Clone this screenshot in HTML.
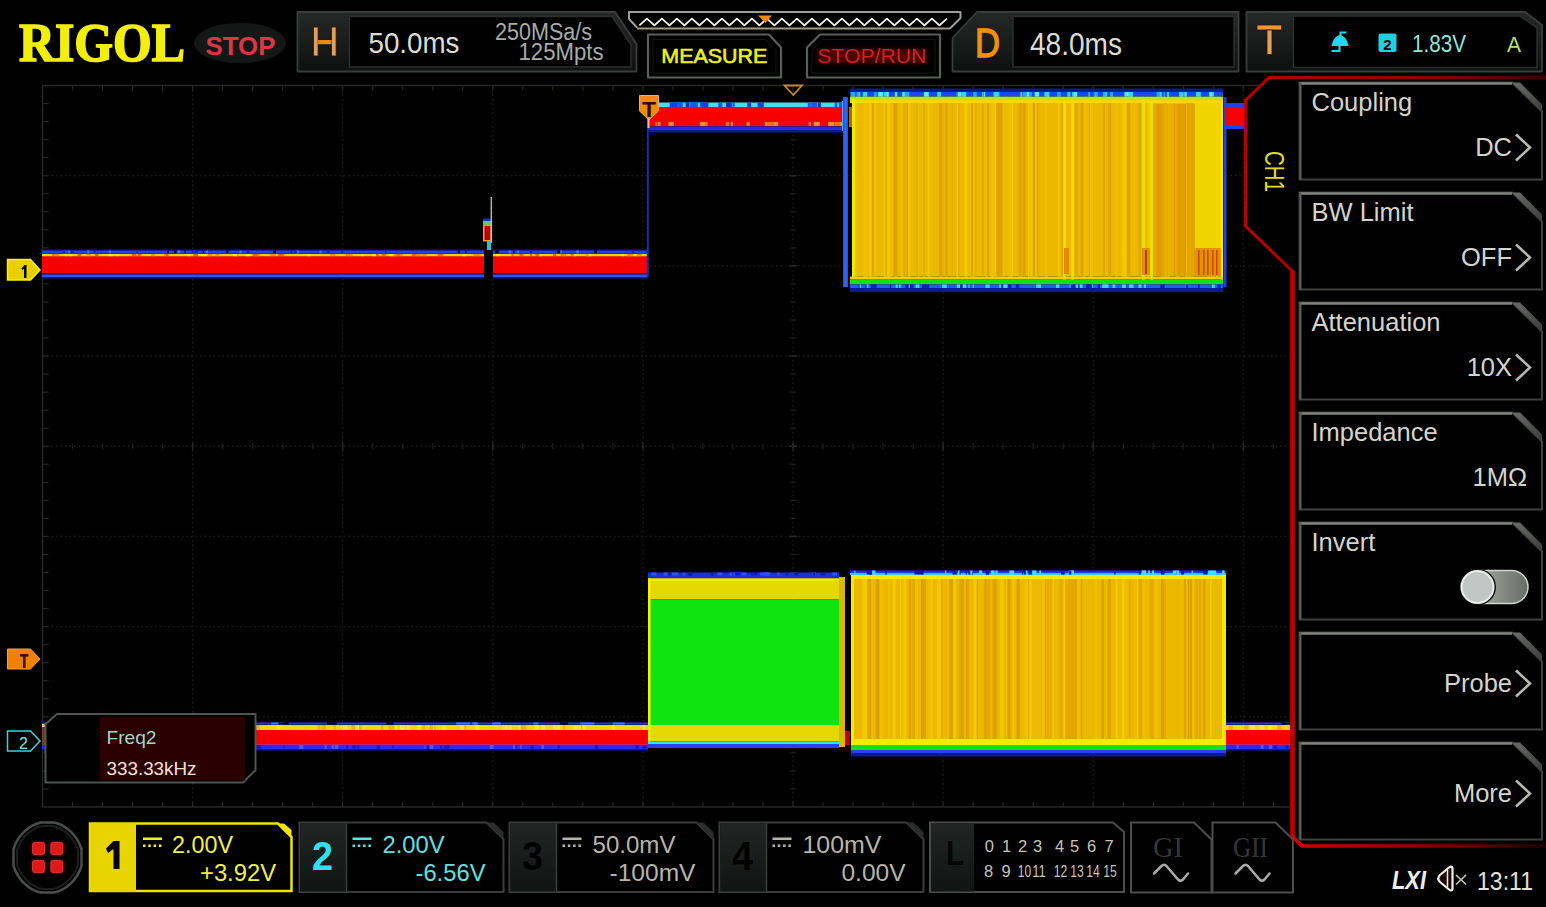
<!DOCTYPE html>
<html><head><meta charset="utf-8"><style>
html,body{margin:0;padding:0;background:#000;width:1546px;height:907px;overflow:hidden}
svg{display:block}
text{font-family:"Liberation Sans", sans-serif}
</style></head><body>
<svg width="1546" height="907" viewBox="0 0 1546 907">
<rect width="1546" height="907" fill="#000"/>
<line x1="42.5" y1="85.5" x2="1291" y2="85.5" stroke="#252823" stroke-width="1.5" />
<line x1="42.5" y1="85.5" x2="42.5" y2="807" stroke="#252823" stroke-width="1.5" />
<line x1="42.5" y1="807" x2="1291" y2="807" stroke="#252823" stroke-width="1.5" />
<line x1="192.6" y1="85.5" x2="192.6" y2="807" stroke="#1e201b" stroke-width="1.3" stroke-dasharray="1.5 3"/>
<line x1="342.7" y1="85.5" x2="342.7" y2="807" stroke="#1e201b" stroke-width="1.3" stroke-dasharray="1.5 3"/>
<line x1="492.79999999999995" y1="85.5" x2="492.79999999999995" y2="807" stroke="#1e201b" stroke-width="1.3" stroke-dasharray="1.5 3"/>
<line x1="642.9" y1="85.5" x2="642.9" y2="807" stroke="#1e201b" stroke-width="1.3" stroke-dasharray="1.5 3"/>
<line x1="793.0" y1="85.5" x2="793.0" y2="807" stroke="#1e201b" stroke-width="1.3" stroke-dasharray="1.5 3"/>
<line x1="943.0999999999999" y1="85.5" x2="943.0999999999999" y2="807" stroke="#1e201b" stroke-width="1.3" stroke-dasharray="1.5 3"/>
<line x1="1093.2" y1="85.5" x2="1093.2" y2="807" stroke="#1e201b" stroke-width="1.3" stroke-dasharray="1.5 3"/>
<line x1="1243.3" y1="85.5" x2="1243.3" y2="807" stroke="#1e201b" stroke-width="1.3" stroke-dasharray="1.5 3"/>
<line x1="42.5" y1="175.69" x2="1291" y2="175.69" stroke="#1e201b" stroke-width="1.3" stroke-dasharray="1.5 3"/>
<line x1="42.5" y1="265.88" x2="1291" y2="265.88" stroke="#1e201b" stroke-width="1.3" stroke-dasharray="1.5 3"/>
<line x1="42.5" y1="356.07" x2="1291" y2="356.07" stroke="#1e201b" stroke-width="1.3" stroke-dasharray="1.5 3"/>
<line x1="42.5" y1="446.26" x2="1291" y2="446.26" stroke="#1e201b" stroke-width="1.3" stroke-dasharray="1.5 3"/>
<line x1="42.5" y1="536.45" x2="1291" y2="536.45" stroke="#1e201b" stroke-width="1.3" stroke-dasharray="1.5 3"/>
<line x1="42.5" y1="626.64" x2="1291" y2="626.64" stroke="#1e201b" stroke-width="1.3" stroke-dasharray="1.5 3"/>
<line x1="42.5" y1="716.8299999999999" x2="1291" y2="716.8299999999999" stroke="#1e201b" stroke-width="1.3" stroke-dasharray="1.5 3"/>
<line x1="72.52" y1="85.5" x2="72.52" y2="90.5" stroke="#252823" stroke-width="1.2" />
<line x1="72.52" y1="802" x2="72.52" y2="807" stroke="#252823" stroke-width="1.2" />
<line x1="72.52" y1="443.26" x2="72.52" y2="449.26" stroke="#1e201b" stroke-width="1.2" />
<line x1="102.53999999999999" y1="85.5" x2="102.53999999999999" y2="90.5" stroke="#252823" stroke-width="1.2" />
<line x1="102.53999999999999" y1="802" x2="102.53999999999999" y2="807" stroke="#252823" stroke-width="1.2" />
<line x1="102.53999999999999" y1="443.26" x2="102.53999999999999" y2="449.26" stroke="#1e201b" stroke-width="1.2" />
<line x1="132.56" y1="85.5" x2="132.56" y2="90.5" stroke="#252823" stroke-width="1.2" />
<line x1="132.56" y1="802" x2="132.56" y2="807" stroke="#252823" stroke-width="1.2" />
<line x1="132.56" y1="443.26" x2="132.56" y2="449.26" stroke="#1e201b" stroke-width="1.2" />
<line x1="162.57999999999998" y1="85.5" x2="162.57999999999998" y2="90.5" stroke="#252823" stroke-width="1.2" />
<line x1="162.57999999999998" y1="802" x2="162.57999999999998" y2="807" stroke="#252823" stroke-width="1.2" />
<line x1="162.57999999999998" y1="443.26" x2="162.57999999999998" y2="449.26" stroke="#1e201b" stroke-width="1.2" />
<line x1="192.6" y1="85.5" x2="192.6" y2="90.5" stroke="#252823" stroke-width="1.2" />
<line x1="192.6" y1="802" x2="192.6" y2="807" stroke="#252823" stroke-width="1.2" />
<line x1="192.6" y1="443.26" x2="192.6" y2="449.26" stroke="#1e201b" stroke-width="1.2" />
<line x1="222.61999999999998" y1="85.5" x2="222.61999999999998" y2="90.5" stroke="#252823" stroke-width="1.2" />
<line x1="222.61999999999998" y1="802" x2="222.61999999999998" y2="807" stroke="#252823" stroke-width="1.2" />
<line x1="222.61999999999998" y1="443.26" x2="222.61999999999998" y2="449.26" stroke="#1e201b" stroke-width="1.2" />
<line x1="252.64000000000001" y1="85.5" x2="252.64000000000001" y2="90.5" stroke="#252823" stroke-width="1.2" />
<line x1="252.64000000000001" y1="802" x2="252.64000000000001" y2="807" stroke="#252823" stroke-width="1.2" />
<line x1="252.64000000000001" y1="443.26" x2="252.64000000000001" y2="449.26" stroke="#1e201b" stroke-width="1.2" />
<line x1="282.65999999999997" y1="85.5" x2="282.65999999999997" y2="90.5" stroke="#252823" stroke-width="1.2" />
<line x1="282.65999999999997" y1="802" x2="282.65999999999997" y2="807" stroke="#252823" stroke-width="1.2" />
<line x1="282.65999999999997" y1="443.26" x2="282.65999999999997" y2="449.26" stroke="#1e201b" stroke-width="1.2" />
<line x1="312.67999999999995" y1="85.5" x2="312.67999999999995" y2="90.5" stroke="#252823" stroke-width="1.2" />
<line x1="312.67999999999995" y1="802" x2="312.67999999999995" y2="807" stroke="#252823" stroke-width="1.2" />
<line x1="312.67999999999995" y1="443.26" x2="312.67999999999995" y2="449.26" stroke="#1e201b" stroke-width="1.2" />
<line x1="342.7" y1="85.5" x2="342.7" y2="90.5" stroke="#252823" stroke-width="1.2" />
<line x1="342.7" y1="802" x2="342.7" y2="807" stroke="#252823" stroke-width="1.2" />
<line x1="342.7" y1="443.26" x2="342.7" y2="449.26" stroke="#1e201b" stroke-width="1.2" />
<line x1="372.71999999999997" y1="85.5" x2="372.71999999999997" y2="90.5" stroke="#252823" stroke-width="1.2" />
<line x1="372.71999999999997" y1="802" x2="372.71999999999997" y2="807" stroke="#252823" stroke-width="1.2" />
<line x1="372.71999999999997" y1="443.26" x2="372.71999999999997" y2="449.26" stroke="#1e201b" stroke-width="1.2" />
<line x1="402.73999999999995" y1="85.5" x2="402.73999999999995" y2="90.5" stroke="#252823" stroke-width="1.2" />
<line x1="402.73999999999995" y1="802" x2="402.73999999999995" y2="807" stroke="#252823" stroke-width="1.2" />
<line x1="402.73999999999995" y1="443.26" x2="402.73999999999995" y2="449.26" stroke="#1e201b" stroke-width="1.2" />
<line x1="432.76" y1="85.5" x2="432.76" y2="90.5" stroke="#252823" stroke-width="1.2" />
<line x1="432.76" y1="802" x2="432.76" y2="807" stroke="#252823" stroke-width="1.2" />
<line x1="432.76" y1="443.26" x2="432.76" y2="449.26" stroke="#1e201b" stroke-width="1.2" />
<line x1="462.78000000000003" y1="85.5" x2="462.78000000000003" y2="90.5" stroke="#252823" stroke-width="1.2" />
<line x1="462.78000000000003" y1="802" x2="462.78000000000003" y2="807" stroke="#252823" stroke-width="1.2" />
<line x1="462.78000000000003" y1="443.26" x2="462.78000000000003" y2="449.26" stroke="#1e201b" stroke-width="1.2" />
<line x1="492.8" y1="85.5" x2="492.8" y2="90.5" stroke="#252823" stroke-width="1.2" />
<line x1="492.8" y1="802" x2="492.8" y2="807" stroke="#252823" stroke-width="1.2" />
<line x1="492.8" y1="443.26" x2="492.8" y2="449.26" stroke="#1e201b" stroke-width="1.2" />
<line x1="522.8199999999999" y1="85.5" x2="522.8199999999999" y2="90.5" stroke="#252823" stroke-width="1.2" />
<line x1="522.8199999999999" y1="802" x2="522.8199999999999" y2="807" stroke="#252823" stroke-width="1.2" />
<line x1="522.8199999999999" y1="443.26" x2="522.8199999999999" y2="449.26" stroke="#1e201b" stroke-width="1.2" />
<line x1="552.8399999999999" y1="85.5" x2="552.8399999999999" y2="90.5" stroke="#252823" stroke-width="1.2" />
<line x1="552.8399999999999" y1="802" x2="552.8399999999999" y2="807" stroke="#252823" stroke-width="1.2" />
<line x1="552.8399999999999" y1="443.26" x2="552.8399999999999" y2="449.26" stroke="#1e201b" stroke-width="1.2" />
<line x1="582.8599999999999" y1="85.5" x2="582.8599999999999" y2="90.5" stroke="#252823" stroke-width="1.2" />
<line x1="582.8599999999999" y1="802" x2="582.8599999999999" y2="807" stroke="#252823" stroke-width="1.2" />
<line x1="582.8599999999999" y1="443.26" x2="582.8599999999999" y2="449.26" stroke="#1e201b" stroke-width="1.2" />
<line x1="612.88" y1="85.5" x2="612.88" y2="90.5" stroke="#252823" stroke-width="1.2" />
<line x1="612.88" y1="802" x2="612.88" y2="807" stroke="#252823" stroke-width="1.2" />
<line x1="612.88" y1="443.26" x2="612.88" y2="449.26" stroke="#1e201b" stroke-width="1.2" />
<line x1="642.9" y1="85.5" x2="642.9" y2="90.5" stroke="#252823" stroke-width="1.2" />
<line x1="642.9" y1="802" x2="642.9" y2="807" stroke="#252823" stroke-width="1.2" />
<line x1="642.9" y1="443.26" x2="642.9" y2="449.26" stroke="#1e201b" stroke-width="1.2" />
<line x1="672.92" y1="85.5" x2="672.92" y2="90.5" stroke="#252823" stroke-width="1.2" />
<line x1="672.92" y1="802" x2="672.92" y2="807" stroke="#252823" stroke-width="1.2" />
<line x1="672.92" y1="443.26" x2="672.92" y2="449.26" stroke="#1e201b" stroke-width="1.2" />
<line x1="702.9399999999999" y1="85.5" x2="702.9399999999999" y2="90.5" stroke="#252823" stroke-width="1.2" />
<line x1="702.9399999999999" y1="802" x2="702.9399999999999" y2="807" stroke="#252823" stroke-width="1.2" />
<line x1="702.9399999999999" y1="443.26" x2="702.9399999999999" y2="449.26" stroke="#1e201b" stroke-width="1.2" />
<line x1="732.9599999999999" y1="85.5" x2="732.9599999999999" y2="90.5" stroke="#252823" stroke-width="1.2" />
<line x1="732.9599999999999" y1="802" x2="732.9599999999999" y2="807" stroke="#252823" stroke-width="1.2" />
<line x1="732.9599999999999" y1="443.26" x2="732.9599999999999" y2="449.26" stroke="#1e201b" stroke-width="1.2" />
<line x1="762.9799999999999" y1="85.5" x2="762.9799999999999" y2="90.5" stroke="#252823" stroke-width="1.2" />
<line x1="762.9799999999999" y1="802" x2="762.9799999999999" y2="807" stroke="#252823" stroke-width="1.2" />
<line x1="762.9799999999999" y1="443.26" x2="762.9799999999999" y2="449.26" stroke="#1e201b" stroke-width="1.2" />
<line x1="793.0" y1="85.5" x2="793.0" y2="90.5" stroke="#252823" stroke-width="1.2" />
<line x1="793.0" y1="802" x2="793.0" y2="807" stroke="#252823" stroke-width="1.2" />
<line x1="793.0" y1="443.26" x2="793.0" y2="449.26" stroke="#1e201b" stroke-width="1.2" />
<line x1="823.02" y1="85.5" x2="823.02" y2="90.5" stroke="#252823" stroke-width="1.2" />
<line x1="823.02" y1="802" x2="823.02" y2="807" stroke="#252823" stroke-width="1.2" />
<line x1="823.02" y1="443.26" x2="823.02" y2="449.26" stroke="#1e201b" stroke-width="1.2" />
<line x1="853.04" y1="85.5" x2="853.04" y2="90.5" stroke="#252823" stroke-width="1.2" />
<line x1="853.04" y1="802" x2="853.04" y2="807" stroke="#252823" stroke-width="1.2" />
<line x1="853.04" y1="443.26" x2="853.04" y2="449.26" stroke="#1e201b" stroke-width="1.2" />
<line x1="883.0600000000001" y1="85.5" x2="883.0600000000001" y2="90.5" stroke="#252823" stroke-width="1.2" />
<line x1="883.0600000000001" y1="802" x2="883.0600000000001" y2="807" stroke="#252823" stroke-width="1.2" />
<line x1="883.0600000000001" y1="443.26" x2="883.0600000000001" y2="449.26" stroke="#1e201b" stroke-width="1.2" />
<line x1="913.0799999999999" y1="85.5" x2="913.0799999999999" y2="90.5" stroke="#252823" stroke-width="1.2" />
<line x1="913.0799999999999" y1="802" x2="913.0799999999999" y2="807" stroke="#252823" stroke-width="1.2" />
<line x1="913.0799999999999" y1="443.26" x2="913.0799999999999" y2="449.26" stroke="#1e201b" stroke-width="1.2" />
<line x1="943.1" y1="85.5" x2="943.1" y2="90.5" stroke="#252823" stroke-width="1.2" />
<line x1="943.1" y1="802" x2="943.1" y2="807" stroke="#252823" stroke-width="1.2" />
<line x1="943.1" y1="443.26" x2="943.1" y2="449.26" stroke="#1e201b" stroke-width="1.2" />
<line x1="973.1199999999999" y1="85.5" x2="973.1199999999999" y2="90.5" stroke="#252823" stroke-width="1.2" />
<line x1="973.1199999999999" y1="802" x2="973.1199999999999" y2="807" stroke="#252823" stroke-width="1.2" />
<line x1="973.1199999999999" y1="443.26" x2="973.1199999999999" y2="449.26" stroke="#1e201b" stroke-width="1.2" />
<line x1="1003.14" y1="85.5" x2="1003.14" y2="90.5" stroke="#252823" stroke-width="1.2" />
<line x1="1003.14" y1="802" x2="1003.14" y2="807" stroke="#252823" stroke-width="1.2" />
<line x1="1003.14" y1="443.26" x2="1003.14" y2="449.26" stroke="#1e201b" stroke-width="1.2" />
<line x1="1033.16" y1="85.5" x2="1033.16" y2="90.5" stroke="#252823" stroke-width="1.2" />
<line x1="1033.16" y1="802" x2="1033.16" y2="807" stroke="#252823" stroke-width="1.2" />
<line x1="1033.16" y1="443.26" x2="1033.16" y2="449.26" stroke="#1e201b" stroke-width="1.2" />
<line x1="1063.1799999999998" y1="85.5" x2="1063.1799999999998" y2="90.5" stroke="#252823" stroke-width="1.2" />
<line x1="1063.1799999999998" y1="802" x2="1063.1799999999998" y2="807" stroke="#252823" stroke-width="1.2" />
<line x1="1063.1799999999998" y1="443.26" x2="1063.1799999999998" y2="449.26" stroke="#1e201b" stroke-width="1.2" />
<line x1="1093.2" y1="85.5" x2="1093.2" y2="90.5" stroke="#252823" stroke-width="1.2" />
<line x1="1093.2" y1="802" x2="1093.2" y2="807" stroke="#252823" stroke-width="1.2" />
<line x1="1093.2" y1="443.26" x2="1093.2" y2="449.26" stroke="#1e201b" stroke-width="1.2" />
<line x1="1123.2199999999998" y1="85.5" x2="1123.2199999999998" y2="90.5" stroke="#252823" stroke-width="1.2" />
<line x1="1123.2199999999998" y1="802" x2="1123.2199999999998" y2="807" stroke="#252823" stroke-width="1.2" />
<line x1="1123.2199999999998" y1="443.26" x2="1123.2199999999998" y2="449.26" stroke="#1e201b" stroke-width="1.2" />
<line x1="1153.24" y1="85.5" x2="1153.24" y2="90.5" stroke="#252823" stroke-width="1.2" />
<line x1="1153.24" y1="802" x2="1153.24" y2="807" stroke="#252823" stroke-width="1.2" />
<line x1="1153.24" y1="443.26" x2="1153.24" y2="449.26" stroke="#1e201b" stroke-width="1.2" />
<line x1="1183.26" y1="85.5" x2="1183.26" y2="90.5" stroke="#252823" stroke-width="1.2" />
<line x1="1183.26" y1="802" x2="1183.26" y2="807" stroke="#252823" stroke-width="1.2" />
<line x1="1183.26" y1="443.26" x2="1183.26" y2="449.26" stroke="#1e201b" stroke-width="1.2" />
<line x1="1213.28" y1="85.5" x2="1213.28" y2="90.5" stroke="#252823" stroke-width="1.2" />
<line x1="1213.28" y1="802" x2="1213.28" y2="807" stroke="#252823" stroke-width="1.2" />
<line x1="1213.28" y1="443.26" x2="1213.28" y2="449.26" stroke="#1e201b" stroke-width="1.2" />
<line x1="1243.3" y1="85.5" x2="1243.3" y2="90.5" stroke="#252823" stroke-width="1.2" />
<line x1="1243.3" y1="802" x2="1243.3" y2="807" stroke="#252823" stroke-width="1.2" />
<line x1="1243.3" y1="443.26" x2="1243.3" y2="449.26" stroke="#1e201b" stroke-width="1.2" />
<line x1="1273.32" y1="85.5" x2="1273.32" y2="90.5" stroke="#252823" stroke-width="1.2" />
<line x1="1273.32" y1="802" x2="1273.32" y2="807" stroke="#252823" stroke-width="1.2" />
<line x1="1273.32" y1="443.26" x2="1273.32" y2="449.26" stroke="#1e201b" stroke-width="1.2" />
<line x1="42.5" y1="103.538" x2="48.5" y2="103.538" stroke="#252823" stroke-width="1.2" />
<line x1="790.0" y1="103.538" x2="796.0" y2="103.538" stroke="#1e201b" stroke-width="1.2" />
<line x1="42.5" y1="121.576" x2="48.5" y2="121.576" stroke="#252823" stroke-width="1.2" />
<line x1="790.0" y1="121.576" x2="796.0" y2="121.576" stroke="#1e201b" stroke-width="1.2" />
<line x1="42.5" y1="139.614" x2="48.5" y2="139.614" stroke="#252823" stroke-width="1.2" />
<line x1="790.0" y1="139.614" x2="796.0" y2="139.614" stroke="#1e201b" stroke-width="1.2" />
<line x1="42.5" y1="157.652" x2="48.5" y2="157.652" stroke="#252823" stroke-width="1.2" />
<line x1="790.0" y1="157.652" x2="796.0" y2="157.652" stroke="#1e201b" stroke-width="1.2" />
<line x1="42.5" y1="175.69" x2="48.5" y2="175.69" stroke="#252823" stroke-width="1.2" />
<line x1="790.0" y1="175.69" x2="796.0" y2="175.69" stroke="#1e201b" stroke-width="1.2" />
<line x1="42.5" y1="193.728" x2="48.5" y2="193.728" stroke="#252823" stroke-width="1.2" />
<line x1="790.0" y1="193.728" x2="796.0" y2="193.728" stroke="#1e201b" stroke-width="1.2" />
<line x1="42.5" y1="211.766" x2="48.5" y2="211.766" stroke="#252823" stroke-width="1.2" />
<line x1="790.0" y1="211.766" x2="796.0" y2="211.766" stroke="#1e201b" stroke-width="1.2" />
<line x1="42.5" y1="229.804" x2="48.5" y2="229.804" stroke="#252823" stroke-width="1.2" />
<line x1="790.0" y1="229.804" x2="796.0" y2="229.804" stroke="#1e201b" stroke-width="1.2" />
<line x1="42.5" y1="247.842" x2="48.5" y2="247.842" stroke="#252823" stroke-width="1.2" />
<line x1="790.0" y1="247.842" x2="796.0" y2="247.842" stroke="#1e201b" stroke-width="1.2" />
<line x1="42.5" y1="265.88" x2="48.5" y2="265.88" stroke="#252823" stroke-width="1.2" />
<line x1="790.0" y1="265.88" x2="796.0" y2="265.88" stroke="#1e201b" stroke-width="1.2" />
<line x1="42.5" y1="283.918" x2="48.5" y2="283.918" stroke="#252823" stroke-width="1.2" />
<line x1="790.0" y1="283.918" x2="796.0" y2="283.918" stroke="#1e201b" stroke-width="1.2" />
<line x1="42.5" y1="301.956" x2="48.5" y2="301.956" stroke="#252823" stroke-width="1.2" />
<line x1="790.0" y1="301.956" x2="796.0" y2="301.956" stroke="#1e201b" stroke-width="1.2" />
<line x1="42.5" y1="319.994" x2="48.5" y2="319.994" stroke="#252823" stroke-width="1.2" />
<line x1="790.0" y1="319.994" x2="796.0" y2="319.994" stroke="#1e201b" stroke-width="1.2" />
<line x1="42.5" y1="338.032" x2="48.5" y2="338.032" stroke="#252823" stroke-width="1.2" />
<line x1="790.0" y1="338.032" x2="796.0" y2="338.032" stroke="#1e201b" stroke-width="1.2" />
<line x1="42.5" y1="356.07" x2="48.5" y2="356.07" stroke="#252823" stroke-width="1.2" />
<line x1="790.0" y1="356.07" x2="796.0" y2="356.07" stroke="#1e201b" stroke-width="1.2" />
<line x1="42.5" y1="374.108" x2="48.5" y2="374.108" stroke="#252823" stroke-width="1.2" />
<line x1="790.0" y1="374.108" x2="796.0" y2="374.108" stroke="#1e201b" stroke-width="1.2" />
<line x1="42.5" y1="392.146" x2="48.5" y2="392.146" stroke="#252823" stroke-width="1.2" />
<line x1="790.0" y1="392.146" x2="796.0" y2="392.146" stroke="#1e201b" stroke-width="1.2" />
<line x1="42.5" y1="410.184" x2="48.5" y2="410.184" stroke="#252823" stroke-width="1.2" />
<line x1="790.0" y1="410.184" x2="796.0" y2="410.184" stroke="#1e201b" stroke-width="1.2" />
<line x1="42.5" y1="428.222" x2="48.5" y2="428.222" stroke="#252823" stroke-width="1.2" />
<line x1="790.0" y1="428.222" x2="796.0" y2="428.222" stroke="#1e201b" stroke-width="1.2" />
<line x1="42.5" y1="446.26" x2="48.5" y2="446.26" stroke="#252823" stroke-width="1.2" />
<line x1="790.0" y1="446.26" x2="796.0" y2="446.26" stroke="#1e201b" stroke-width="1.2" />
<line x1="42.5" y1="464.298" x2="48.5" y2="464.298" stroke="#252823" stroke-width="1.2" />
<line x1="790.0" y1="464.298" x2="796.0" y2="464.298" stroke="#1e201b" stroke-width="1.2" />
<line x1="42.5" y1="482.33599999999996" x2="48.5" y2="482.33599999999996" stroke="#252823" stroke-width="1.2" />
<line x1="790.0" y1="482.33599999999996" x2="796.0" y2="482.33599999999996" stroke="#1e201b" stroke-width="1.2" />
<line x1="42.5" y1="500.37399999999997" x2="48.5" y2="500.37399999999997" stroke="#252823" stroke-width="1.2" />
<line x1="790.0" y1="500.37399999999997" x2="796.0" y2="500.37399999999997" stroke="#1e201b" stroke-width="1.2" />
<line x1="42.5" y1="518.412" x2="48.5" y2="518.412" stroke="#252823" stroke-width="1.2" />
<line x1="790.0" y1="518.412" x2="796.0" y2="518.412" stroke="#1e201b" stroke-width="1.2" />
<line x1="42.5" y1="536.45" x2="48.5" y2="536.45" stroke="#252823" stroke-width="1.2" />
<line x1="790.0" y1="536.45" x2="796.0" y2="536.45" stroke="#1e201b" stroke-width="1.2" />
<line x1="42.5" y1="554.488" x2="48.5" y2="554.488" stroke="#252823" stroke-width="1.2" />
<line x1="790.0" y1="554.488" x2="796.0" y2="554.488" stroke="#1e201b" stroke-width="1.2" />
<line x1="42.5" y1="572.5260000000001" x2="48.5" y2="572.5260000000001" stroke="#252823" stroke-width="1.2" />
<line x1="790.0" y1="572.5260000000001" x2="796.0" y2="572.5260000000001" stroke="#1e201b" stroke-width="1.2" />
<line x1="42.5" y1="590.564" x2="48.5" y2="590.564" stroke="#252823" stroke-width="1.2" />
<line x1="790.0" y1="590.564" x2="796.0" y2="590.564" stroke="#1e201b" stroke-width="1.2" />
<line x1="42.5" y1="608.602" x2="48.5" y2="608.602" stroke="#252823" stroke-width="1.2" />
<line x1="790.0" y1="608.602" x2="796.0" y2="608.602" stroke="#1e201b" stroke-width="1.2" />
<line x1="42.5" y1="626.64" x2="48.5" y2="626.64" stroke="#252823" stroke-width="1.2" />
<line x1="790.0" y1="626.64" x2="796.0" y2="626.64" stroke="#1e201b" stroke-width="1.2" />
<line x1="42.5" y1="644.678" x2="48.5" y2="644.678" stroke="#252823" stroke-width="1.2" />
<line x1="790.0" y1="644.678" x2="796.0" y2="644.678" stroke="#1e201b" stroke-width="1.2" />
<line x1="42.5" y1="662.716" x2="48.5" y2="662.716" stroke="#252823" stroke-width="1.2" />
<line x1="790.0" y1="662.716" x2="796.0" y2="662.716" stroke="#1e201b" stroke-width="1.2" />
<line x1="42.5" y1="680.754" x2="48.5" y2="680.754" stroke="#252823" stroke-width="1.2" />
<line x1="790.0" y1="680.754" x2="796.0" y2="680.754" stroke="#1e201b" stroke-width="1.2" />
<line x1="42.5" y1="698.792" x2="48.5" y2="698.792" stroke="#252823" stroke-width="1.2" />
<line x1="790.0" y1="698.792" x2="796.0" y2="698.792" stroke="#1e201b" stroke-width="1.2" />
<line x1="42.5" y1="716.83" x2="48.5" y2="716.83" stroke="#252823" stroke-width="1.2" />
<line x1="790.0" y1="716.83" x2="796.0" y2="716.83" stroke="#1e201b" stroke-width="1.2" />
<line x1="42.5" y1="734.868" x2="48.5" y2="734.868" stroke="#252823" stroke-width="1.2" />
<line x1="790.0" y1="734.868" x2="796.0" y2="734.868" stroke="#1e201b" stroke-width="1.2" />
<line x1="42.5" y1="752.906" x2="48.5" y2="752.906" stroke="#252823" stroke-width="1.2" />
<line x1="790.0" y1="752.906" x2="796.0" y2="752.906" stroke="#1e201b" stroke-width="1.2" />
<line x1="42.5" y1="770.944" x2="48.5" y2="770.944" stroke="#252823" stroke-width="1.2" />
<line x1="790.0" y1="770.944" x2="796.0" y2="770.944" stroke="#1e201b" stroke-width="1.2" />
<line x1="42.5" y1="788.982" x2="48.5" y2="788.982" stroke="#252823" stroke-width="1.2" />
<line x1="790.0" y1="788.982" x2="796.0" y2="788.982" stroke="#1e201b" stroke-width="1.2" />
<line x1="192.6" y1="442.26" x2="192.6" y2="450.26" stroke="#252823" stroke-width="1.5" />
<line x1="342.7" y1="442.26" x2="342.7" y2="450.26" stroke="#252823" stroke-width="1.5" />
<line x1="492.79999999999995" y1="442.26" x2="492.79999999999995" y2="450.26" stroke="#252823" stroke-width="1.5" />
<line x1="642.9" y1="442.26" x2="642.9" y2="450.26" stroke="#252823" stroke-width="1.5" />
<line x1="793.0" y1="442.26" x2="793.0" y2="450.26" stroke="#252823" stroke-width="1.5" />
<line x1="943.0999999999999" y1="442.26" x2="943.0999999999999" y2="450.26" stroke="#252823" stroke-width="1.5" />
<line x1="1093.2" y1="442.26" x2="1093.2" y2="450.26" stroke="#252823" stroke-width="1.5" />
<line x1="1243.3" y1="442.26" x2="1243.3" y2="450.26" stroke="#252823" stroke-width="1.5" />
<line x1="789.0" y1="175.69" x2="797.0" y2="175.69" stroke="#252823" stroke-width="1.5" />
<line x1="789.0" y1="265.88" x2="797.0" y2="265.88" stroke="#252823" stroke-width="1.5" />
<line x1="789.0" y1="356.07" x2="797.0" y2="356.07" stroke="#252823" stroke-width="1.5" />
<line x1="789.0" y1="446.26" x2="797.0" y2="446.26" stroke="#252823" stroke-width="1.5" />
<line x1="789.0" y1="536.45" x2="797.0" y2="536.45" stroke="#252823" stroke-width="1.5" />
<line x1="789.0" y1="626.64" x2="797.0" y2="626.64" stroke="#252823" stroke-width="1.5" />
<line x1="789.0" y1="716.8299999999999" x2="797.0" y2="716.8299999999999" stroke="#252823" stroke-width="1.5" />
<rect x="42" y="249.5" width="442" height="1" fill="#0a1a9a" />
<rect x="42" y="250.5" width="442" height="3" fill="#2a3cf0" />
<rect x="184.5" y="250.5" width="1.3" height="3" fill="#000" />
<rect x="63.2" y="250.5" width="2.6" height="3" fill="#5070ff" />
<rect x="202.9" y="250.5" width="1.1" height="3" fill="#000" />
<rect x="136.5" y="250.5" width="1.2" height="3" fill="#1020c0" />
<rect x="72.7" y="250.5" width="1.2" height="3" fill="#1020c0" />
<rect x="68.0" y="250.5" width="2.1" height="3" fill="#5070ff" />
<rect x="319.5" y="250.5" width="2.2" height="3" fill="#5070ff" />
<rect x="295.9" y="250.5" width="1.8" height="3" fill="#5070ff" />
<rect x="62.5" y="250.5" width="2.7" height="3" fill="#1020c0" />
<rect x="226.4" y="250.5" width="2.1" height="3" fill="#000" />
<rect x="177.7" y="250.5" width="2.6" height="3" fill="#5070ff" />
<rect x="87.3" y="250.5" width="2.1" height="3" fill="#5070ff" />
<rect x="205.9" y="250.5" width="2.1" height="3" fill="#5070ff" />
<rect x="290.3" y="250.5" width="2.2" height="3" fill="#1020c0" />
<rect x="341.4" y="250.5" width="1.9" height="3" fill="#1020c0" />
<rect x="246.9" y="250.5" width="2.8" height="3" fill="#1020c0" />
<rect x="173.9" y="250.5" width="2.6" height="3" fill="#000" />
<rect x="385.1" y="250.5" width="1.2" height="3" fill="#1020c0" />
<rect x="273.1" y="250.5" width="2.8" height="3" fill="#000" />
<rect x="239.5" y="250.5" width="2.2" height="3" fill="#5070ff" />
<rect x="93.9" y="250.5" width="1.8" height="3" fill="#1020c0" />
<rect x="108.9" y="250.5" width="2.0" height="3" fill="#5070ff" />
<rect x="465.3" y="250.5" width="1.2" height="3" fill="#000" />
<rect x="294.1" y="250.5" width="2.8" height="3" fill="#1020c0" />
<rect x="191.7" y="250.5" width="1.7" height="3" fill="#1020c0" />
<rect x="297.2" y="250.5" width="1.9" height="3" fill="#5070ff" />
<rect x="457.7" y="250.5" width="1.9" height="3" fill="#000" />
<rect x="70.6" y="250.5" width="2.5" height="3" fill="#1020c0" />
<rect x="326.7" y="250.5" width="3.0" height="3" fill="#1020c0" />
<rect x="167.2" y="250.5" width="1.8" height="3" fill="#000" />
<rect x="194.7" y="250.5" width="2.9" height="3" fill="#1020c0" />
<rect x="42" y="253.5" width="442" height="4" fill="#f60000" />
<rect x="42" y="254" width="442" height="2.5" fill="#f0d000" />
<rect x="115.9" y="254" width="2.5" height="2.5" fill="#f8f000" />
<rect x="138.0" y="254" width="3.1" height="2.5" fill="#f06000" />
<rect x="151.0" y="254" width="3.6" height="2.5" fill="#f09000" />
<rect x="77.5" y="254" width="3.8" height="2.5" fill="#f06000" />
<rect x="164.2" y="254" width="2.5" height="2.5" fill="#f09000" />
<rect x="422.2" y="254" width="3.1" height="2.5" fill="#f09000" />
<rect x="476.0" y="254" width="4.7" height="2.5" fill="#f09000" />
<rect x="463.4" y="254" width="2.6" height="2.5" fill="#f8f000" />
<rect x="108.6" y="254" width="4.6" height="2.5" fill="#f8f000" />
<rect x="255.4" y="254" width="4.4" height="2.5" fill="#f09000" />
<rect x="166.0" y="254" width="2.6" height="2.5" fill="#f06000" />
<rect x="204.5" y="254" width="4.3" height="2.5" fill="#f8f000" />
<rect x="345.8" y="254" width="4.1" height="2.5" fill="#f06000" />
<rect x="330.2" y="254" width="5.0" height="2.5" fill="#f09000" />
<rect x="437.8" y="254" width="5.1" height="2.5" fill="#f06000" />
<rect x="393.1" y="254" width="3.6" height="2.5" fill="#f09000" />
<rect x="215.4" y="254" width="3.9" height="2.5" fill="#f09000" />
<rect x="69.4" y="254" width="2.3" height="2.5" fill="#f8f000" />
<rect x="235.9" y="254" width="2.4" height="2.5" fill="#f06000" />
<rect x="65.1" y="254" width="2.0" height="2.5" fill="#f8f000" />
<rect x="278.1" y="254" width="5.8" height="2.5" fill="#f06000" />
<rect x="53.2" y="254" width="5.5" height="2.5" fill="#f06000" />
<rect x="207.5" y="254" width="4.5" height="2.5" fill="#f09000" />
<rect x="307.0" y="254" width="3.9" height="2.5" fill="#f8f000" />
<rect x="415.5" y="254" width="6.0" height="2.5" fill="#f09000" />
<rect x="253.4" y="254" width="3.2" height="2.5" fill="#f8f000" />
<rect x="87.0" y="254" width="3.4" height="2.5" fill="#f09000" />
<rect x="252.6" y="254" width="4.8" height="2.5" fill="#f06000" />
<rect x="52.2" y="254" width="5.8" height="2.5" fill="#f06000" />
<rect x="201.2" y="254" width="4.8" height="2.5" fill="#f8f000" />
<rect x="375.6" y="254" width="3.2" height="2.5" fill="#f06000" />
<rect x="421.9" y="254" width="4.8" height="2.5" fill="#f09000" />
<rect x="270.1" y="254" width="5.6" height="2.5" fill="#f09000" />
<rect x="381.7" y="254" width="4.1" height="2.5" fill="#f06000" />
<rect x="187.1" y="254" width="2.9" height="2.5" fill="#f8f000" />
<rect x="396.7" y="254" width="5.3" height="2.5" fill="#f06000" />
<rect x="395.5" y="254" width="2.8" height="2.5" fill="#f09000" />
<rect x="198.4" y="254" width="2.1" height="2.5" fill="#f8f000" />
<rect x="389.7" y="254" width="3.9" height="2.5" fill="#f8f000" />
<rect x="346.7" y="254" width="5.8" height="2.5" fill="#f09000" />
<rect x="397.8" y="254" width="4.9" height="2.5" fill="#f09000" />
<rect x="462.2" y="254" width="3.5" height="2.5" fill="#f8f000" />
<rect x="86.9" y="254" width="3.9" height="2.5" fill="#f09000" />
<rect x="131.9" y="254" width="4.5" height="2.5" fill="#f06000" />
<rect x="411.8" y="254" width="3.9" height="2.5" fill="#f06000" />
<rect x="193.4" y="254" width="4.6" height="2.5" fill="#f06000" />
<rect x="94.8" y="254" width="3.6" height="2.5" fill="#f06000" />
<rect x="372.1" y="254" width="3.9" height="2.5" fill="#f8f000" />
<rect x="232.9" y="254" width="4.5" height="2.5" fill="#f8f000" />
<rect x="394.4" y="254" width="5.9" height="2.5" fill="#f09000" />
<rect x="245.8" y="254" width="5.0" height="2.5" fill="#f8f000" />
<rect x="360.9" y="254" width="2.7" height="2.5" fill="#f8f000" />
<rect x="54.1" y="254" width="4.4" height="2.5" fill="#f09000" />
<rect x="396.9" y="254" width="2.6" height="2.5" fill="#f06000" />
<rect x="473.3" y="254" width="4.6" height="2.5" fill="#f09000" />
<rect x="42" y="256.5" width="442" height="17" fill="#f60000" />
<rect x="42" y="273.5" width="442" height="1" fill="#500060" />
<rect x="42" y="274.5" width="442" height="2.5" fill="#3050f0" />
<rect x="42" y="277" width="442" height="1.5" fill="#0a1a9a" />
<rect x="493" y="249.5" width="155" height="1" fill="#0a1a9a" />
<rect x="493" y="250.5" width="155" height="3" fill="#2a3cf0" />
<rect x="516.9" y="250.5" width="2.1" height="3" fill="#5070ff" />
<rect x="495.2" y="250.5" width="2.9" height="3" fill="#000" />
<rect x="508.7" y="250.5" width="2.5" height="3" fill="#5070ff" />
<rect x="559.4" y="250.5" width="2.7" height="3" fill="#5070ff" />
<rect x="497.3" y="250.5" width="1.4" height="3" fill="#000" />
<rect x="529.8" y="250.5" width="2.2" height="3" fill="#1020c0" />
<rect x="576.3" y="250.5" width="2.7" height="3" fill="#5070ff" />
<rect x="632.2" y="250.5" width="1.7" height="3" fill="#1020c0" />
<rect x="594.4" y="250.5" width="2.6" height="3" fill="#000" />
<rect x="557.4" y="250.5" width="2.8" height="3" fill="#000" />
<rect x="513.0" y="250.5" width="1.3" height="3" fill="#000" />
<rect x="493" y="253.5" width="155" height="4" fill="#f60000" />
<rect x="493" y="254" width="155" height="2.5" fill="#f0d000" />
<rect x="495.9" y="254" width="3.8" height="2.5" fill="#f8f000" />
<rect x="586.1" y="254" width="5.1" height="2.5" fill="#f8f000" />
<rect x="519.4" y="254" width="3.9" height="2.5" fill="#f06000" />
<rect x="511.4" y="254" width="2.2" height="2.5" fill="#f06000" />
<rect x="572.3" y="254" width="4.2" height="2.5" fill="#f8f000" />
<rect x="628.1" y="254" width="2.2" height="2.5" fill="#f8f000" />
<rect x="535.4" y="254" width="5.1" height="2.5" fill="#f06000" />
<rect x="562.2" y="254" width="2.1" height="2.5" fill="#f8f000" />
<rect x="560.8" y="254" width="4.5" height="2.5" fill="#f06000" />
<rect x="585.7" y="254" width="2.8" height="2.5" fill="#f09000" />
<rect x="562.2" y="254" width="4.1" height="2.5" fill="#f09000" />
<rect x="570.7" y="254" width="3.0" height="2.5" fill="#f06000" />
<rect x="627.1" y="254" width="5.8" height="2.5" fill="#f09000" />
<rect x="634.2" y="254" width="5.6" height="2.5" fill="#f8f000" />
<rect x="621.5" y="254" width="2.5" height="2.5" fill="#f8f000" />
<rect x="553.0" y="254" width="3.3" height="2.5" fill="#f06000" />
<rect x="529.8" y="254" width="2.3" height="2.5" fill="#f06000" />
<rect x="539.3" y="254" width="2.5" height="2.5" fill="#f8f000" />
<rect x="636.7" y="254" width="4.6" height="2.5" fill="#f09000" />
<rect x="493" y="256.5" width="155" height="17" fill="#f60000" />
<rect x="493" y="273.5" width="155" height="1" fill="#500060" />
<rect x="493" y="274.5" width="155" height="2.5" fill="#3050f0" />
<rect x="493" y="277" width="155" height="1.5" fill="#0a1a9a" />
<rect x="484.5" y="241" width="7.5" height="36" fill="#000000" />
<rect x="483" y="218.5" width="9" height="3" fill="#1830c0" />
<rect x="483" y="221" width="9" height="20.5" fill="#f0a040" />
<rect x="484.5" y="226" width="6" height="14" fill="#c00000" />
<rect x="483" y="221" width="9" height="5" fill="#60d040" />
<rect x="490.6" y="197" width="1.3" height="46" fill="#a0d8c8" />
<rect x="487" y="241" width="4" height="9" fill="#30c0c0" />
<rect x="646.8" y="103" width="2" height="174" fill="#1a2cb0" />
<rect x="648" y="102.5" width="194" height="4.5" fill="#40e0f0" />
<rect x="675.5" y="102.5" width="7.3" height="4.5" fill="#1858f0" />
<rect x="690.2" y="102.5" width="7.7" height="4.5" fill="#1858f0" />
<rect x="817.9" y="102.5" width="3.0" height="4.5" fill="#0830c0" />
<rect x="807.8" y="102.5" width="3.0" height="4.5" fill="#1858f0" />
<rect x="838.9" y="102.5" width="4.4" height="4.5" fill="#1858f0" />
<rect x="685.6" y="102.5" width="3.9" height="4.5" fill="#0830c0" />
<rect x="718.3" y="102.5" width="4.0" height="4.5" fill="#1858f0" />
<rect x="732.6" y="102.5" width="2.1" height="4.5" fill="#1858f0" />
<rect x="747.3" y="102.5" width="3.8" height="4.5" fill="#1040e0" />
<rect x="669.7" y="102.5" width="7.5" height="4.5" fill="#1040e0" />
<rect x="834.6" y="102.5" width="2.6" height="4.5" fill="#1858f0" />
<rect x="700.2" y="102.5" width="7.4" height="4.5" fill="#1040e0" />
<rect x="699.9" y="102.5" width="2.8" height="4.5" fill="#1858f0" />
<rect x="811.1" y="102.5" width="6.1" height="4.5" fill="#1858f0" />
<rect x="725.9" y="102.5" width="5.2" height="4.5" fill="#0830c0" />
<rect x="757.6" y="102.5" width="6.2" height="4.5" fill="#1040e0" />
<rect x="701.6" y="102.5" width="6.8" height="4.5" fill="#1040e0" />
<rect x="729.7" y="102.5" width="2.4" height="4.5" fill="#1040e0" />
<rect x="648" y="107" width="194" height="19.5" fill="#f60000" />
<rect x="769.8" y="122" width="5.2" height="4" fill="#f07010" />
<rect x="764.8" y="122" width="2.9" height="4" fill="#f09020" />
<rect x="813.7" y="122" width="3.8" height="4" fill="#f09020" />
<rect x="838.9" y="122" width="3.7" height="4" fill="#f09020" />
<rect x="767.4" y="122" width="2.2" height="4" fill="#f07010" />
<rect x="828.1" y="122" width="5.9" height="4" fill="#f09020" />
<rect x="657.7" y="122" width="2.8" height="4" fill="#f09020" />
<rect x="768.7" y="122" width="4.1" height="4" fill="#f07010" />
<rect x="703.7" y="122" width="4.0" height="4" fill="#f07010" />
<rect x="699.9" y="122" width="5.2" height="4" fill="#f09020" />
<rect x="655.1" y="122" width="2.1" height="4" fill="#f07010" />
<rect x="746.7" y="122" width="3.0" height="4" fill="#f09020" />
<rect x="668.4" y="122" width="5.3" height="4" fill="#f09020" />
<rect x="774.0" y="122" width="4.2" height="4" fill="#f09020" />
<rect x="834.3" y="122" width="3.2" height="4" fill="#f07010" />
<rect x="836.6" y="122" width="3.4" height="4" fill="#f07010" />
<rect x="725.7" y="122" width="3.4" height="4" fill="#f07010" />
<rect x="808.7" y="122" width="2.1" height="4" fill="#f09020" />
<rect x="730.7" y="122" width="2.2" height="4" fill="#f09020" />
<rect x="815.1" y="122" width="4.7" height="4" fill="#f09020" />
<rect x="648" y="126.5" width="194" height="3.5" fill="#2828f0" />
<rect x="648" y="130" width="194" height="2.5" fill="#0a1a9a" />
<polygon points="639.5,95.5 658.5,95.5 658.5,111 649,120 639.5,111" fill="#f08a10" stroke="#f8b040" stroke-width="1" />
<text x="649" y="117" font-size="22" fill="#380800" text-anchor="middle" font-weight="bold" textLength="14" lengthAdjust="spacingAndGlyphs" >T</text>
<rect x="647.5" y="118" width="2" height="10" fill="#f8c080" />
<rect x="842" y="101" width="3" height="30" fill="#60a0ff" />
<rect x="843" y="97" width="5" height="190" fill="#2850e0" />
<rect x="844.5" y="97" width="2" height="190" fill="#3068ff" />
<rect x="849" y="107" width="3" height="20" fill="#c06000" />
<rect x="850" y="88.5" width="373" height="3.5" fill="#0a1a9a" />
<rect x="850" y="92" width="373" height="4.6" fill="#1848f0" />
<rect x="1072.1" y="92" width="3.8" height="4.6" fill="#40d0f0" />
<rect x="1020.5" y="92" width="1.6" height="4.6" fill="#60e8ff" />
<rect x="851.3" y="92" width="2.5" height="4.6" fill="#60e8ff" />
<rect x="1210.8" y="92" width="3.2" height="4.6" fill="#40d0f0" />
<rect x="862.8" y="92" width="4.5" height="4.6" fill="#40d0f0" />
<rect x="982.3" y="92" width="1.0" height="4.6" fill="#60e8ff" />
<rect x="881.1" y="92" width="2.1" height="4.6" fill="#30a0f0" />
<rect x="924.6" y="92" width="3.0" height="4.6" fill="#40d0f0" />
<rect x="883.7" y="92" width="4.3" height="4.6" fill="#40d0f0" />
<rect x="998.2" y="92" width="1.2" height="4.6" fill="#40d0f0" />
<rect x="961.2" y="92" width="3.5" height="4.6" fill="#40d0f0" />
<rect x="1067.3" y="92" width="3.1" height="4.6" fill="#40d0f0" />
<rect x="1093.9" y="92" width="3.9" height="4.6" fill="#30a0f0" />
<rect x="994.5" y="92" width="2.3" height="4.6" fill="#60e8ff" />
<rect x="905.5" y="92" width="3.9" height="4.6" fill="#30a0f0" />
<rect x="903.7" y="92" width="4.3" height="4.6" fill="#30a0f0" />
<rect x="1180.9" y="92" width="3.5" height="4.6" fill="#30a0f0" />
<rect x="1110.1" y="92" width="3.0" height="4.6" fill="#30a0f0" />
<rect x="1129.3" y="92" width="3.3" height="4.6" fill="#40d0f0" />
<rect x="1156.6" y="92" width="3.3" height="4.6" fill="#30a0f0" />
<rect x="1103.4" y="92" width="3.8" height="4.6" fill="#40d0f0" />
<rect x="881.6" y="92" width="1.2" height="4.6" fill="#30a0f0" />
<rect x="983.8" y="92" width="1.4" height="4.6" fill="#60e8ff" />
<rect x="1057.2" y="92" width="3.5" height="4.6" fill="#30a0f0" />
<rect x="1047.2" y="92" width="2.0" height="4.6" fill="#60e8ff" />
<rect x="851.2" y="92" width="4.2" height="4.6" fill="#30a0f0" />
<rect x="1196.0" y="92" width="4.6" height="4.6" fill="#40d0f0" />
<rect x="1094.6" y="92" width="1.3" height="4.6" fill="#30a0f0" />
<rect x="1025.8" y="92" width="4.2" height="4.6" fill="#60e8ff" />
<rect x="937.1" y="92" width="4.0" height="4.6" fill="#40d0f0" />
<rect x="1124.5" y="92" width="4.9" height="4.6" fill="#60e8ff" />
<rect x="1163.7" y="92" width="1.3" height="4.6" fill="#30a0f0" />
<rect x="956.6" y="92" width="1.2" height="4.6" fill="#30a0f0" />
<rect x="1088.5" y="92" width="1.3" height="4.6" fill="#40d0f0" />
<rect x="973.1" y="92" width="3.6" height="4.6" fill="#30a0f0" />
<rect x="962.9" y="92" width="3.3" height="4.6" fill="#40d0f0" />
<rect x="1029.0" y="92" width="2.9" height="4.6" fill="#30a0f0" />
<rect x="886.9" y="92" width="1.9" height="4.6" fill="#60e8ff" />
<rect x="957.9" y="92" width="3.1" height="4.6" fill="#60e8ff" />
<rect x="1022.8" y="92" width="4.1" height="4.6" fill="#30a0f0" />
<rect x="923.9" y="92" width="4.9" height="4.6" fill="#60e8ff" />
<rect x="856.5" y="92" width="2.8" height="4.6" fill="#30a0f0" />
<rect x="1209.2" y="92" width="2.8" height="4.6" fill="#60e8ff" />
<rect x="993.5" y="92" width="4.7" height="4.6" fill="#40d0f0" />
<rect x="877.7" y="92" width="1.4" height="4.6" fill="#30a0f0" />
<rect x="1044.4" y="92" width="4.8" height="4.6" fill="#40d0f0" />
<rect x="1073.8" y="92" width="3.5" height="4.6" fill="#60e8ff" />
<rect x="1179.0" y="92" width="3.8" height="4.6" fill="#40d0f0" />
<rect x="1034.7" y="92" width="4.5" height="4.6" fill="#60e8ff" />
<rect x="859.2" y="92" width="1.0" height="4.6" fill="#60e8ff" />
<rect x="1102.9" y="92" width="2.6" height="4.6" fill="#30a0f0" />
<rect x="902.2" y="92" width="2.4" height="4.6" fill="#60e8ff" />
<rect x="894.9" y="92" width="2.3" height="4.6" fill="#60e8ff" />
<rect x="1128.5" y="92" width="4.4" height="4.6" fill="#40d0f0" />
<rect x="1198.7" y="92" width="1.8" height="4.6" fill="#40d0f0" />
<rect x="1184.5" y="92" width="2.2" height="4.6" fill="#60e8ff" />
<rect x="874.1" y="92" width="2.6" height="4.6" fill="#30a0f0" />
<rect x="878.3" y="92" width="4.7" height="4.6" fill="#60e8ff" />
<rect x="1166.9" y="92" width="2.1" height="4.6" fill="#40d0f0" />
<rect x="1159.7" y="92" width="2.1" height="4.6" fill="#40d0f0" />
<rect x="850" y="96.6" width="373" height="3.4" fill="#a8f000" />
<rect x="850" y="100" width="373" height="3" fill="#f8d800" />
<rect x="852" y="103" width="371" height="173.6" fill="#ecb800" />
<rect x="945.8" y="103" width="1.7" height="173.6" fill="#dca000" />
<rect x="969.9" y="103" width="2.9" height="173.6" fill="#f2be00" />
<rect x="1176.9" y="103" width="3.0" height="173.6" fill="#f2be00" />
<rect x="1187.5" y="103" width="3.4" height="173.6" fill="#dca000" />
<rect x="929.1" y="103" width="1.2" height="173.6" fill="#f2be00" />
<rect x="1019.1" y="103" width="2.9" height="173.6" fill="#e0a400" />
<rect x="1031.7" y="103" width="3.3" height="173.6" fill="#dca000" />
<rect x="901.3" y="103" width="2.2" height="173.6" fill="#e0a400" />
<rect x="957.6" y="103" width="1.6" height="173.6" fill="#e0a400" />
<rect x="1002.9" y="103" width="1.6" height="173.6" fill="#f2be00" />
<rect x="1057.9" y="103" width="2.0" height="173.6" fill="#f6c800" />
<rect x="1089.1" y="103" width="1.2" height="173.6" fill="#dca000" />
<rect x="1184.8" y="103" width="2.2" height="173.6" fill="#f6c800" />
<rect x="1019.9" y="103" width="1.8" height="173.6" fill="#f2be00" />
<rect x="1010.6" y="103" width="2.4" height="173.6" fill="#f6c800" />
<rect x="888.0" y="103" width="1.9" height="173.6" fill="#e4a800" />
<rect x="971.2" y="103" width="1.9" height="173.6" fill="#dca000" />
<rect x="928.6" y="103" width="1.1" height="173.6" fill="#f2be00" />
<rect x="994.4" y="103" width="2.9" height="173.6" fill="#f6c800" />
<rect x="992.2" y="103" width="1.8" height="173.6" fill="#e4a800" />
<rect x="1036.3" y="103" width="2.4" height="173.6" fill="#e0a400" />
<rect x="900.8" y="103" width="2.3" height="173.6" fill="#f6c800" />
<rect x="888.7" y="103" width="3.2" height="173.6" fill="#f2be00" />
<rect x="1000.5" y="103" width="2.1" height="173.6" fill="#e0a400" />
<rect x="1163.9" y="103" width="3.2" height="173.6" fill="#e4a800" />
<rect x="901.3" y="103" width="2.1" height="173.6" fill="#f2be00" />
<rect x="1207.5" y="103" width="2.2" height="173.6" fill="#e4a800" />
<rect x="997.5" y="103" width="3.3" height="173.6" fill="#dca000" />
<rect x="1166.4" y="103" width="3.4" height="173.6" fill="#f6c800" />
<rect x="1140.1" y="103" width="1.6" height="173.6" fill="#f6c800" />
<rect x="1045.1" y="103" width="2.7" height="173.6" fill="#f2be00" />
<rect x="885.9" y="103" width="2.9" height="173.6" fill="#e4a800" />
<rect x="1139.8" y="103" width="1.6" height="173.6" fill="#e4a800" />
<rect x="1090.0" y="103" width="1.8" height="173.6" fill="#f6c800" />
<rect x="1083.0" y="103" width="2.3" height="173.6" fill="#f2be00" />
<rect x="1109.3" y="103" width="1.3" height="173.6" fill="#e4a800" />
<rect x="964.3" y="103" width="3.4" height="173.6" fill="#f6c800" />
<rect x="996.3" y="103" width="1.6" height="173.6" fill="#dca000" />
<rect x="855.4" y="103" width="2.3" height="173.6" fill="#f2be00" />
<rect x="956.4" y="103" width="1.8" height="173.6" fill="#f6c800" />
<rect x="1028.0" y="103" width="1.6" height="173.6" fill="#f6c800" />
<rect x="865.7" y="103" width="2.0" height="173.6" fill="#e0a400" />
<rect x="875.1" y="103" width="1.5" height="173.6" fill="#f2be00" />
<rect x="884.5" y="103" width="1.6" height="173.6" fill="#f2be00" />
<rect x="1191.8" y="103" width="1.6" height="173.6" fill="#e4a800" />
<rect x="1108.3" y="103" width="2.8" height="173.6" fill="#e0a400" />
<rect x="1103.5" y="103" width="1.5" height="173.6" fill="#e0a400" />
<rect x="1124.0" y="103" width="2.3" height="173.6" fill="#f6c800" />
<rect x="1035.4" y="103" width="1.5" height="173.6" fill="#f6c800" />
<rect x="939.0" y="103" width="1.6" height="173.6" fill="#e0a400" />
<rect x="894.7" y="103" width="2.6" height="173.6" fill="#dca000" />
<rect x="923.2" y="103" width="1.6" height="173.6" fill="#f2be00" />
<rect x="1186.4" y="103" width="1.1" height="173.6" fill="#dca000" />
<rect x="908.3" y="103" width="2.0" height="173.6" fill="#f6c800" />
<rect x="863.6" y="103" width="2.5" height="173.6" fill="#f2be00" />
<rect x="873.9" y="103" width="1.2" height="173.6" fill="#f2be00" />
<rect x="1018.7" y="103" width="2.8" height="173.6" fill="#e0a400" />
<rect x="1121.7" y="103" width="3.5" height="173.6" fill="#f6c800" />
<rect x="974.8" y="103" width="1.5" height="173.6" fill="#dca000" />
<rect x="1126.7" y="103" width="1.1" height="173.6" fill="#f2be00" />
<rect x="1160.4" y="103" width="3.5" height="173.6" fill="#f2be00" />
<rect x="916.6" y="103" width="1.0" height="173.6" fill="#e0a400" />
<rect x="884.4" y="103" width="2.1" height="173.6" fill="#e4a800" />
<rect x="1059.3" y="103" width="2.9" height="173.6" fill="#f2be00" />
<rect x="984.8" y="103" width="3.1" height="173.6" fill="#f2be00" />
<rect x="886.9" y="103" width="2.8" height="173.6" fill="#f6c800" />
<rect x="990.7" y="103" width="3.3" height="173.6" fill="#f6c800" />
<rect x="972.7" y="103" width="2.8" height="173.6" fill="#f2be00" />
<rect x="866.0" y="103" width="2.0" height="173.6" fill="#f2be00" />
<rect x="869.8" y="103" width="1.1" height="173.6" fill="#e4a800" />
<rect x="1147.4" y="103" width="1.2" height="173.6" fill="#f6c800" />
<rect x="1127.0" y="103" width="3.2" height="173.6" fill="#e0a400" />
<rect x="987.1" y="103" width="1.8" height="173.6" fill="#dca000" />
<rect x="870.9" y="103" width="2.9" height="173.6" fill="#e0a400" />
<rect x="1191.4" y="103" width="1.7" height="173.6" fill="#dca000" />
<rect x="1188.6" y="103" width="2.6" height="173.6" fill="#e4a800" />
<rect x="863.8" y="103" width="1.6" height="173.6" fill="#f2be00" />
<rect x="1115.5" y="103" width="2.2" height="173.6" fill="#f2be00" />
<rect x="1142.5" y="103" width="3.3" height="173.6" fill="#f2be00" />
<rect x="903.3" y="103" width="2.2" height="173.6" fill="#e4a800" />
<rect x="1147.1" y="103" width="2.8" height="173.6" fill="#f6c800" />
<rect x="1076.0" y="103" width="1.8" height="173.6" fill="#e0a400" />
<rect x="1022.7" y="103" width="3.0" height="173.6" fill="#dca000" />
<rect x="883.8" y="103" width="1.5" height="173.6" fill="#f6c800" />
<rect x="945.0" y="103" width="1.2" height="173.6" fill="#e4a800" />
<rect x="1030.3" y="103" width="2.4" height="173.6" fill="#f6c800" />
<rect x="1211.8" y="103" width="3.2" height="173.6" fill="#e4a800" />
<rect x="951.4" y="103" width="1.2" height="173.6" fill="#e4a800" />
<rect x="1008.3" y="103" width="3.5" height="173.6" fill="#f2be00" />
<rect x="918.0" y="103" width="1.3" height="173.6" fill="#f2be00" />
<rect x="1080.8" y="103" width="2.7" height="173.6" fill="#dca000" />
<rect x="1163.3" y="103" width="2.7" height="173.6" fill="#e4a800" />
<rect x="1138.8" y="103" width="1.7" height="173.6" fill="#e0a400" />
<rect x="1061.3" y="103" width="1.9" height="173.6" fill="#e0a400" />
<rect x="927.5" y="103" width="1.6" height="173.6" fill="#f6c800" />
<rect x="940.7" y="103" width="1.7" height="173.6" fill="#dca000" />
<rect x="923.5" y="103" width="1.2" height="173.6" fill="#e0a400" />
<rect x="1216.3" y="103" width="2.3" height="173.6" fill="#f6c800" />
<rect x="1091.5" y="103" width="1.3" height="173.6" fill="#f2be00" />
<rect x="1215.7" y="103" width="1.3" height="173.6" fill="#f2be00" />
<rect x="1176.3" y="103" width="1.6" height="173.6" fill="#f2be00" />
<rect x="1187.8" y="103" width="1.1" height="173.6" fill="#e0a400" />
<rect x="939.8" y="103" width="1.1" height="173.6" fill="#dca000" />
<rect x="1209.2" y="103" width="2.5" height="173.6" fill="#e4a800" />
<rect x="990.5" y="103" width="3.2" height="173.6" fill="#f2be00" />
<rect x="1074.5" y="103" width="2.9" height="173.6" fill="#e4a800" />
<rect x="893.5" y="103" width="2.5" height="173.6" fill="#dca000" />
<rect x="982.3" y="103" width="1.1" height="173.6" fill="#e0a400" />
<rect x="906.5" y="103" width="1.5" height="173.6" fill="#e0a400" />
<rect x="868.9" y="103" width="2.8" height="173.6" fill="#f6c800" />
<rect x="852" y="99" width="3" height="180" fill="#f2ea00" />
<rect x="1195" y="103" width="27" height="173" fill="#f0d400" />
<rect x="1063" y="100" width="3" height="180" fill="#f0e000" />
<rect x="1071" y="100" width="3" height="180" fill="#f0e000" />
<rect x="1142" y="100" width="3" height="180" fill="#f0e000" />
<rect x="1150" y="100" width="3" height="180" fill="#f0e000" />
<rect x="1064" y="248" width="5" height="26" fill="#e08a00" />
<rect x="1142" y="248" width="10" height="27" fill="#e09000" />
<rect x="1145" y="250" width="2" height="24" fill="#b04000" />
<rect x="1150" y="104" width="45" height="172" fill="#e4a400" />
<rect x="1184.6" y="104" width="2.6" height="172" fill="#ecb400" />
<rect x="1179.1" y="104" width="1.4" height="172" fill="#ecb400" />
<rect x="1155.1" y="104" width="1.1" height="172" fill="#ecb400" />
<rect x="1173.9" y="104" width="1.1" height="172" fill="#dc9c00" />
<rect x="1183.8" y="104" width="2.3" height="172" fill="#dc9c00" />
<rect x="1177.6" y="104" width="1.2" height="172" fill="#dc9c00" />
<rect x="1167.9" y="104" width="1.5" height="172" fill="#ecb400" />
<rect x="1178.7" y="104" width="1.8" height="172" fill="#dc9c00" />
<rect x="1164.5" y="104" width="2.1" height="172" fill="#ecb400" />
<rect x="1168.6" y="104" width="1.0" height="172" fill="#ecb400" />
<rect x="1177.8" y="104" width="1.8" height="172" fill="#ecb400" />
<rect x="1160.1" y="104" width="1.0" height="172" fill="#dc9c00" />
<rect x="1169.0" y="104" width="2.6" height="172" fill="#ecb400" />
<rect x="1175.1" y="104" width="1.7" height="172" fill="#dc9c00" />
<rect x="1157.2" y="104" width="1.1" height="172" fill="#dc9c00" />
<rect x="1177.6" y="104" width="2.8" height="172" fill="#dc9c00" />
<rect x="1174.9" y="104" width="2.9" height="172" fill="#e8a800" />
<rect x="1172.2" y="104" width="1.3" height="172" fill="#ecb400" />
<rect x="1158.5" y="104" width="1.3" height="172" fill="#dc9c00" />
<rect x="1156.4" y="104" width="2.0" height="172" fill="#dc9c00" />
<rect x="1195" y="248" width="27" height="28" fill="#e89000" />
<rect x="1198" y="250" width="1.6" height="25" fill="#c05000" />
<rect x="1203" y="250" width="1.6" height="25" fill="#c05000" />
<rect x="1207" y="250" width="1.6" height="25" fill="#c05000" />
<rect x="1212" y="250" width="1.6" height="25" fill="#c05000" />
<rect x="1216" y="250" width="1.6" height="25" fill="#c05000" />
<rect x="1150" y="100" width="3" height="176" fill="#f0e000" />
<rect x="1221" y="100" width="2" height="180" fill="#f2ea00" />
<rect x="850" y="276.6" width="373" height="3" fill="#f0d000" />
<rect x="850" y="279.6" width="373" height="4.8" fill="#10e410" />
<rect x="850" y="284.4" width="373" height="3.6" fill="#2060f0" />
<rect x="961.9" y="284.4" width="4.3" height="3.6" fill="#40d0f0" />
<rect x="1211.9" y="284.4" width="2.9" height="3.6" fill="#40d0f0" />
<rect x="1075.4" y="284.4" width="3.5" height="3.6" fill="#40d0f0" />
<rect x="1185.5" y="284.4" width="3.5" height="3.6" fill="#40d0f0" />
<rect x="1087.6" y="284.4" width="4.4" height="3.6" fill="#0828b0" />
<rect x="1078.1" y="284.4" width="1.8" height="3.6" fill="#0828b0" />
<rect x="917.9" y="284.4" width="1.9" height="3.6" fill="#0828b0" />
<rect x="1198.2" y="284.4" width="1.6" height="3.6" fill="#0828b0" />
<rect x="895.7" y="284.4" width="2.0" height="3.6" fill="#40d0f0" />
<rect x="865.2" y="284.4" width="3.2" height="3.6" fill="#40d0f0" />
<rect x="1097.8" y="284.4" width="2.3" height="3.6" fill="#0828b0" />
<rect x="1072.4" y="284.4" width="3.2" height="3.6" fill="#0828b0" />
<rect x="1090.8" y="284.4" width="2.2" height="3.6" fill="#40d0f0" />
<rect x="1007.9" y="284.4" width="3.6" height="3.6" fill="#0828b0" />
<rect x="1036.8" y="284.4" width="1.7" height="3.6" fill="#40d0f0" />
<rect x="1079.6" y="284.4" width="3.0" height="3.6" fill="#40d0f0" />
<rect x="1015.8" y="284.4" width="3.5" height="3.6" fill="#0828b0" />
<rect x="1160.4" y="284.4" width="4.2" height="3.6" fill="#0828b0" />
<rect x="889.7" y="284.4" width="1.5" height="3.6" fill="#0828b0" />
<rect x="985.5" y="284.4" width="4.2" height="3.6" fill="#40d0f0" />
<rect x="865.1" y="284.4" width="1.5" height="3.6" fill="#0828b0" />
<rect x="1138.5" y="284.4" width="3.0" height="3.6" fill="#40d0f0" />
<rect x="1129.0" y="284.4" width="4.6" height="3.6" fill="#40d0f0" />
<rect x="859.6" y="284.4" width="1.3" height="3.6" fill="#40d0f0" />
<rect x="921.9" y="284.4" width="4.9" height="3.6" fill="#0828b0" />
<rect x="956.8" y="284.4" width="4.2" height="3.6" fill="#40d0f0" />
<rect x="1104.6" y="284.4" width="3.9" height="3.6" fill="#40d0f0" />
<rect x="874.3" y="284.4" width="2.4" height="3.6" fill="#0828b0" />
<rect x="908.9" y="284.4" width="4.6" height="3.6" fill="#0828b0" />
<rect x="1185.8" y="284.4" width="2.8" height="3.6" fill="#0828b0" />
<rect x="1036.3" y="284.4" width="4.7" height="3.6" fill="#40d0f0" />
<rect x="1069.6" y="284.4" width="3.5" height="3.6" fill="#40d0f0" />
<rect x="968.4" y="284.4" width="1.1" height="3.6" fill="#40d0f0" />
<rect x="999.7" y="284.4" width="3.5" height="3.6" fill="#0828b0" />
<rect x="1102.2" y="284.4" width="4.6" height="3.6" fill="#40d0f0" />
<rect x="1143.9" y="284.4" width="2.1" height="3.6" fill="#40d0f0" />
<rect x="1086.1" y="284.4" width="2.4" height="3.6" fill="#0828b0" />
<rect x="1056.0" y="284.4" width="3.3" height="3.6" fill="#40d0f0" />
<rect x="943.5" y="284.4" width="3.1" height="3.6" fill="#0828b0" />
<rect x="1123.8" y="284.4" width="2.5" height="3.6" fill="#0828b0" />
<rect x="1217.5" y="284.4" width="3.3" height="3.6" fill="#0828b0" />
<rect x="972.7" y="284.4" width="1.3" height="3.6" fill="#40d0f0" />
<rect x="915.6" y="284.4" width="4.0" height="3.6" fill="#40d0f0" />
<rect x="960.0" y="284.4" width="3.1" height="3.6" fill="#0828b0" />
<rect x="1087.2" y="284.4" width="4.9" height="3.6" fill="#0828b0" />
<rect x="1122.0" y="284.4" width="4.0" height="3.6" fill="#40d0f0" />
<rect x="905.4" y="284.4" width="3.5" height="3.6" fill="#0828b0" />
<rect x="1005.0" y="284.4" width="2.5" height="3.6" fill="#40d0f0" />
<rect x="899.0" y="284.4" width="1.9" height="3.6" fill="#40d0f0" />
<rect x="858.3" y="284.4" width="1.0" height="3.6" fill="#0828b0" />
<rect x="962.7" y="284.4" width="3.1" height="3.6" fill="#40d0f0" />
<rect x="1003.3" y="284.4" width="2.2" height="3.6" fill="#40d0f0" />
<rect x="925.8" y="284.4" width="3.5" height="3.6" fill="#0828b0" />
<rect x="908.8" y="284.4" width="1.1" height="3.6" fill="#40d0f0" />
<rect x="1112.5" y="284.4" width="2.8" height="3.6" fill="#40d0f0" />
<rect x="1086.8" y="284.4" width="4.5" height="3.6" fill="#0828b0" />
<rect x="999.1" y="284.4" width="2.1" height="3.6" fill="#40d0f0" />
<rect x="870.8" y="284.4" width="4.3" height="3.6" fill="#0828b0" />
<rect x="1070.6" y="284.4" width="3.3" height="3.6" fill="#0828b0" />
<rect x="942.2" y="284.4" width="4.6" height="3.6" fill="#40d0f0" />
<rect x="850" y="288" width="373" height="4" fill="#0a1a9a" />
<rect x="1223.5" y="97" width="3" height="190" fill="#2040e0" />
<rect x="1226" y="103" width="19" height="5" fill="#2040f0" />
<rect x="1226" y="108" width="19" height="19" fill="#f60000" />
<rect x="1226" y="126" width="19" height="3" fill="#2040f0" />
<rect x="42" y="722.5" width="606" height="2" fill="#2438e8" />
<rect x="79.2" y="722.5" width="3.3" height="2" fill="#000" />
<rect x="185.6" y="722.5" width="3.7" height="2" fill="#000" />
<rect x="49.5" y="722.5" width="9.6" height="2" fill="#000" />
<rect x="127.9" y="722.5" width="5.4" height="2" fill="#5070ff" />
<rect x="533.3" y="722.5" width="5.1" height="2" fill="#5070ff" />
<rect x="80.5" y="722.5" width="10.5" height="2" fill="#5070ff" />
<rect x="474.1" y="722.5" width="3.1" height="2" fill="#5070ff" />
<rect x="492.1" y="722.5" width="8.6" height="2" fill="#5070ff" />
<rect x="147.9" y="722.5" width="15.0" height="2" fill="#5070ff" />
<rect x="182.3" y="722.5" width="3.5" height="2" fill="#5070ff" />
<rect x="580.3" y="722.5" width="14.1" height="2" fill="#5070ff" />
<rect x="471.9" y="722.5" width="6.2" height="2" fill="#5070ff" />
<rect x="456.2" y="722.5" width="14.0" height="2" fill="#5070ff" />
<rect x="220.6" y="722.5" width="14.1" height="2" fill="#000" />
<rect x="93.6" y="722.5" width="9.1" height="2" fill="#000" />
<rect x="199.3" y="722.5" width="5.8" height="2" fill="#000" />
<rect x="612.6" y="722.5" width="12.0" height="2" fill="#5070ff" />
<rect x="157.9" y="722.5" width="7.7" height="2" fill="#000" />
<rect x="271.2" y="722.5" width="13.2" height="2" fill="#5070ff" />
<rect x="327.2" y="722.5" width="9.4" height="2" fill="#000" />
<rect x="559.9" y="722.5" width="8.2" height="2" fill="#000" />
<rect x="386.5" y="722.5" width="6.7" height="2" fill="#000" />
<rect x="278.5" y="722.5" width="10.0" height="2" fill="#000" />
<rect x="129.3" y="722.5" width="3.3" height="2" fill="#000" />
<rect x="42" y="725" width="606" height="5" fill="#f0d800" />
<rect x="417.7" y="725" width="2.5" height="5" fill="#f8f000" />
<rect x="465.2" y="725" width="2.1" height="5" fill="#f8f000" />
<rect x="460.3" y="725" width="3.9" height="5" fill="#f8e040" />
<rect x="83.0" y="725" width="2.1" height="5" fill="#f8e040" />
<rect x="502.1" y="725" width="2.6" height="5" fill="#f8e040" />
<rect x="580.3" y="725" width="2.2" height="5" fill="#f8e040" />
<rect x="612.4" y="725" width="2.3" height="5" fill="#f8f000" />
<rect x="164.7" y="725" width="2.1" height="5" fill="#f8e040" />
<rect x="94.8" y="725" width="4.3" height="5" fill="#f8e040" />
<rect x="215.6" y="725" width="2.3" height="5" fill="#f8f000" />
<rect x="520.3" y="725" width="3.9" height="5" fill="#f0b000" />
<rect x="234.8" y="725" width="3.3" height="5" fill="#f8f000" />
<rect x="253.9" y="725" width="4.8" height="5" fill="#f8f000" />
<rect x="474.3" y="725" width="3.1" height="5" fill="#f0b000" />
<rect x="506.6" y="725" width="3.8" height="5" fill="#f0b000" />
<rect x="556.2" y="725" width="3.9" height="5" fill="#f8f000" />
<rect x="518.6" y="725" width="2.1" height="5" fill="#f8e040" />
<rect x="508.9" y="725" width="3.0" height="5" fill="#f8e040" />
<rect x="71.1" y="725" width="3.7" height="5" fill="#f8e040" />
<rect x="562.8" y="725" width="2.3" height="5" fill="#f0b000" />
<rect x="144.9" y="725" width="2.0" height="5" fill="#f8f000" />
<rect x="216.2" y="725" width="4.3" height="5" fill="#f8f000" />
<rect x="44.6" y="725" width="3.5" height="5" fill="#f0b000" />
<rect x="461.9" y="725" width="4.5" height="5" fill="#f0b000" />
<rect x="399.9" y="725" width="4.9" height="5" fill="#f8e040" />
<rect x="199.4" y="725" width="4.8" height="5" fill="#f0b000" />
<rect x="534.4" y="725" width="4.8" height="5" fill="#f8f000" />
<rect x="343.0" y="725" width="2.3" height="5" fill="#f8e040" />
<rect x="505.2" y="725" width="3.5" height="5" fill="#f8e040" />
<rect x="381.0" y="725" width="2.3" height="5" fill="#f0b000" />
<rect x="256.8" y="725" width="3.2" height="5" fill="#f0b000" />
<rect x="580.7" y="725" width="4.2" height="5" fill="#f0b000" />
<rect x="578.6" y="725" width="2.1" height="5" fill="#f8f000" />
<rect x="225.1" y="725" width="3.3" height="5" fill="#f8e040" />
<rect x="344.7" y="725" width="3.1" height="5" fill="#f8e040" />
<rect x="183.1" y="725" width="3.4" height="5" fill="#f8e040" />
<rect x="400.8" y="725" width="4.1" height="5" fill="#f8e040" />
<rect x="432.4" y="725" width="3.0" height="5" fill="#f0b000" />
<rect x="357.1" y="725" width="4.6" height="5" fill="#f0b000" />
<rect x="441.9" y="725" width="4.2" height="5" fill="#f8f000" />
<rect x="321.7" y="725" width="4.1" height="5" fill="#f0b000" />
<rect x="391.8" y="725" width="2.4" height="5" fill="#f0b000" />
<rect x="430.2" y="725" width="4.1" height="5" fill="#f8e040" />
<rect x="157.7" y="725" width="2.9" height="5" fill="#f8e040" />
<rect x="541.2" y="725" width="3.9" height="5" fill="#f8e040" />
<rect x="136.2" y="725" width="2.7" height="5" fill="#f0b000" />
<rect x="406.1" y="725" width="3.0" height="5" fill="#f8f000" />
<rect x="240.2" y="725" width="2.6" height="5" fill="#f8e040" />
<rect x="642.9" y="725" width="2.5" height="5" fill="#f8e040" />
<rect x="103.4" y="725" width="3.2" height="5" fill="#f8f000" />
<rect x="522.1" y="725" width="4.2" height="5" fill="#f0b000" />
<rect x="207.4" y="725" width="2.3" height="5" fill="#f8f000" />
<rect x="211.6" y="725" width="4.7" height="5" fill="#f0b000" />
<rect x="62.5" y="725" width="3.2" height="5" fill="#f0b000" />
<rect x="460.8" y="725" width="3.5" height="5" fill="#f8e040" />
<rect x="220.9" y="725" width="2.1" height="5" fill="#f0b000" />
<rect x="406.6" y="725" width="3.2" height="5" fill="#f8e040" />
<rect x="188.3" y="725" width="4.6" height="5" fill="#f8e040" />
<rect x="388.7" y="725" width="4.2" height="5" fill="#f0b000" />
<rect x="553.0" y="725" width="4.0" height="5" fill="#f8e040" />
<rect x="573.6" y="725" width="4.3" height="5" fill="#f8e040" />
<rect x="394.6" y="725" width="2.7" height="5" fill="#f8f000" />
<rect x="429.5" y="725" width="3.4" height="5" fill="#f0b000" />
<rect x="198.9" y="725" width="4.1" height="5" fill="#f0b000" />
<rect x="188.4" y="725" width="3.2" height="5" fill="#f8e040" />
<rect x="422.3" y="725" width="2.8" height="5" fill="#f0b000" />
<rect x="333.6" y="725" width="2.1" height="5" fill="#f0b000" />
<rect x="355.0" y="725" width="4.0" height="5" fill="#f8f000" />
<rect x="582.3" y="725" width="3.0" height="5" fill="#f8f000" />
<rect x="276.8" y="725" width="3.5" height="5" fill="#f8f000" />
<rect x="65.0" y="725" width="3.6" height="5" fill="#f8f000" />
<rect x="474.6" y="725" width="4.9" height="5" fill="#f8f000" />
<rect x="355.6" y="725" width="2.3" height="5" fill="#f8e040" />
<rect x="317.9" y="725" width="2.6" height="5" fill="#f0b000" />
<rect x="351.4" y="725" width="3.9" height="5" fill="#f0b000" />
<rect x="42" y="730" width="606" height="14.3" fill="#f60000" />
<rect x="42" y="744" width="606" height="1" fill="#c02080" />
<rect x="42" y="745" width="606" height="4" fill="#2030f0" />
<rect x="357.1" y="745" width="2.2" height="4" fill="#1020c0" />
<rect x="168.9" y="745" width="3.1" height="4" fill="#1020c0" />
<rect x="352.3" y="745" width="3.8" height="4" fill="#1020c0" />
<rect x="427.1" y="745" width="1.8" height="4" fill="#1020c0" />
<rect x="283.4" y="745" width="1.0" height="4" fill="#1020c0" />
<rect x="594.9" y="745" width="2.9" height="4" fill="#1020c0" />
<rect x="392.4" y="745" width="1.3" height="4" fill="#1020c0" />
<rect x="489.8" y="745" width="3.8" height="4" fill="#4060ff" />
<rect x="642.5" y="745" width="3.9" height="4" fill="#1020c0" />
<rect x="170.1" y="745" width="1.4" height="4" fill="#4060ff" />
<rect x="531.0" y="745" width="2.9" height="4" fill="#1020c0" />
<rect x="429.9" y="745" width="3.2" height="4" fill="#4060ff" />
<rect x="255.3" y="745" width="2.9" height="4" fill="#1020c0" />
<rect x="324.7" y="745" width="1.9" height="4" fill="#4060ff" />
<rect x="513.0" y="745" width="2.4" height="4" fill="#4060ff" />
<rect x="203.5" y="745" width="2.1" height="4" fill="#1020c0" />
<rect x="635.7" y="745" width="3.0" height="4" fill="#1020c0" />
<rect x="43.6" y="745" width="3.2" height="4" fill="#1020c0" />
<rect x="258.2" y="745" width="3.0" height="4" fill="#1020c0" />
<rect x="331.6" y="745" width="2.3" height="4" fill="#4060ff" />
<rect x="440.2" y="745" width="2.1" height="4" fill="#1020c0" />
<rect x="558.1" y="745" width="1.2" height="4" fill="#1020c0" />
<rect x="515.6" y="745" width="1.4" height="4" fill="#1020c0" />
<rect x="424.4" y="745" width="1.0" height="4" fill="#4060ff" />
<rect x="168.7" y="745" width="1.2" height="4" fill="#1020c0" />
<rect x="193.0" y="745" width="1.3" height="4" fill="#4060ff" />
<rect x="557.9" y="745" width="1.6" height="4" fill="#1020c0" />
<rect x="251.3" y="745" width="1.5" height="4" fill="#1020c0" />
<rect x="520.2" y="745" width="1.5" height="4" fill="#4060ff" />
<rect x="445.7" y="745" width="3.7" height="4" fill="#1020c0" />
<rect x="161.2" y="745" width="3.1" height="4" fill="#4060ff" />
<rect x="490.1" y="745" width="2.3" height="4" fill="#4060ff" />
<rect x="377.3" y="745" width="1.8" height="4" fill="#4060ff" />
<rect x="541.5" y="745" width="2.4" height="4" fill="#4060ff" />
<rect x="334.6" y="745" width="3.7" height="4" fill="#1020c0" />
<rect x="190.9" y="745" width="1.5" height="4" fill="#4060ff" />
<rect x="138.9" y="745" width="2.0" height="4" fill="#1020c0" />
<rect x="443.8" y="745" width="3.5" height="4" fill="#1020c0" />
<rect x="299.2" y="745" width="4.0" height="4" fill="#4060ff" />
<rect x="151.0" y="745" width="2.1" height="4" fill="#4060ff" />
<rect x="54.4" y="745" width="1.1" height="4" fill="#1020c0" />
<rect x="530.4" y="745" width="1.3" height="4" fill="#1020c0" />
<rect x="334.7" y="745" width="3.7" height="4" fill="#4060ff" />
<rect x="170.9" y="745" width="2.2" height="4" fill="#4060ff" />
<rect x="246.5" y="745" width="3.6" height="4" fill="#1020c0" />
<rect x="248.2" y="745" width="3.3" height="4" fill="#4060ff" />
<rect x="213.6" y="745" width="2.0" height="4" fill="#1020c0" />
<rect x="376.6" y="745" width="3.5" height="4" fill="#1020c0" />
<rect x="256.5" y="745" width="2.5" height="4" fill="#1020c0" />
<rect x="346.3" y="745" width="1.8" height="4" fill="#1020c0" />
<rect x="42" y="749" width="606" height="1.5" fill="#0a1a9a" />
<rect x="648" y="572.5" width="191" height="6" fill="#1a30e8" />
<rect x="832.3" y="572.5" width="4.6" height="3" fill="#3050ff" />
<rect x="710.5" y="572.5" width="3.3" height="3" fill="#0820b0" />
<rect x="672.1" y="572.5" width="5.9" height="3" fill="#3050ff" />
<rect x="796.2" y="572.5" width="2.2" height="3" fill="#0820b0" />
<rect x="751.1" y="572.5" width="2.2" height="3" fill="#0820b0" />
<rect x="668.5" y="572.5" width="2.2" height="3" fill="#0820b0" />
<rect x="763.0" y="572.5" width="4.6" height="3" fill="#0820b0" />
<rect x="764.6" y="572.5" width="4.5" height="3" fill="#3050ff" />
<rect x="688.2" y="572.5" width="4.7" height="3" fill="#0820b0" />
<rect x="766.2" y="572.5" width="2.7" height="3" fill="#3050ff" />
<rect x="812.3" y="572.5" width="3.7" height="3" fill="#3050ff" />
<rect x="820.8" y="572.5" width="4.6" height="3" fill="#0820b0" />
<rect x="812.8" y="572.5" width="2.6" height="3" fill="#0820b0" />
<rect x="754.2" y="572.5" width="3.0" height="3" fill="#0820b0" />
<rect x="682.9" y="572.5" width="2.1" height="3" fill="#3050ff" />
<rect x="729.4" y="572.5" width="4.6" height="3" fill="#3050ff" />
<rect x="742.1" y="572.5" width="4.1" height="3" fill="#3050ff" />
<rect x="794.2" y="572.5" width="3.7" height="3" fill="#0820b0" />
<rect x="732.4" y="572.5" width="2.1" height="3" fill="#0820b0" />
<rect x="760.2" y="572.5" width="6.0" height="3" fill="#3050ff" />
<rect x="737.9" y="572.5" width="3.6" height="3" fill="#3050ff" />
<rect x="663.7" y="572.5" width="3.9" height="3" fill="#3050ff" />
<rect x="766.5" y="572.5" width="3.7" height="3" fill="#3050ff" />
<rect x="777.2" y="572.5" width="2.5" height="3" fill="#3050ff" />
<rect x="689.2" y="572.5" width="2.5" height="3" fill="#0820b0" />
<rect x="651.4" y="572.5" width="4.9" height="3" fill="#3050ff" />
<rect x="733.2" y="572.5" width="5.0" height="3" fill="#3050ff" />
<rect x="717.2" y="572.5" width="5.0" height="3" fill="#3050ff" />
<rect x="785.9" y="572.5" width="2.3" height="3" fill="#0820b0" />
<rect x="735.0" y="572.5" width="5.7" height="3" fill="#0820b0" />
<rect x="648" y="578.5" width="191" height="21" fill="#e4d800" />
<rect x="648" y="599.5" width="191" height="125.5" fill="#10e410" />
<rect x="648" y="725" width="191" height="16.5" fill="#e4d800" />
<rect x="648" y="741.5" width="191" height="2.5" fill="#40e0e0" />
<rect x="648" y="744" width="191" height="4" fill="#2a40f4" />
<rect x="648" y="578.5" width="2.5" height="163" fill="#f8f000" />
<rect x="648" y="578.5" width="191" height="2" fill="#f8f000" />
<rect x="839" y="577" width="6" height="170" fill="#d8b800" />
<rect x="845" y="577" width="5" height="170" fill="#000" />
<rect x="845" y="731" width="5" height="14" fill="#c00000" />
<rect x="850" y="570.5" width="376" height="4.5" fill="#1a30f0" />
<rect x="850" y="573" width="376" height="2" fill="#40c0f0" />
<rect x="1191.7" y="570.5" width="1.2" height="4" fill="#40e0ff" />
<rect x="854.3" y="570.5" width="1.1" height="4" fill="#40e0ff" />
<rect x="995.5" y="570.5" width="2.2" height="4" fill="#40e0ff" />
<rect x="1208.2" y="570.5" width="4.3" height="4" fill="#40e0ff" />
<rect x="968.3" y="570.5" width="4.8" height="4" fill="#0a1aa0" />
<rect x="1025.7" y="570.5" width="1.7" height="4" fill="#40e0ff" />
<rect x="985.9" y="570.5" width="3.6" height="4" fill="#0a1aa0" />
<rect x="1028.4" y="570.5" width="4.1" height="4" fill="#0a1aa0" />
<rect x="1203.4" y="570.5" width="4.1" height="4" fill="#0a1aa0" />
<rect x="959.4" y="570.5" width="1.2" height="4" fill="#0a1aa0" />
<rect x="1175.2" y="570.5" width="3.9" height="4" fill="#40e0ff" />
<rect x="1160.9" y="570.5" width="3.4" height="4" fill="#0a1aa0" />
<rect x="1068.7" y="570.5" width="4.9" height="4" fill="#40e0ff" />
<rect x="990.9" y="570.5" width="3.7" height="4" fill="#40e0ff" />
<rect x="1152.0" y="570.5" width="2.1" height="4" fill="#40e0ff" />
<rect x="970.3" y="570.5" width="2.1" height="4" fill="#40e0ff" />
<rect x="1069.4" y="570.5" width="4.3" height="4" fill="#40e0ff" />
<rect x="957.9" y="570.5" width="1.6" height="4" fill="#40e0ff" />
<rect x="952.4" y="570.5" width="4.4" height="4" fill="#0a1aa0" />
<rect x="979.7" y="570.5" width="1.3" height="4" fill="#0a1aa0" />
<rect x="1148.2" y="570.5" width="1.8" height="4" fill="#40e0ff" />
<rect x="965.7" y="570.5" width="1.2" height="4" fill="#0a1aa0" />
<rect x="1024.0" y="570.5" width="1.8" height="4" fill="#0a1aa0" />
<rect x="1069.3" y="570.5" width="1.0" height="4" fill="#0a1aa0" />
<rect x="1021.9" y="570.5" width="1.4" height="4" fill="#0a1aa0" />
<rect x="1138.8" y="570.5" width="1.9" height="4" fill="#0a1aa0" />
<rect x="1181.0" y="570.5" width="3.1" height="4" fill="#0a1aa0" />
<rect x="1039.3" y="570.5" width="1.8" height="4" fill="#40e0ff" />
<rect x="921.9" y="570.5" width="1.7" height="4" fill="#0a1aa0" />
<rect x="985.7" y="570.5" width="3.3" height="4" fill="#0a1aa0" />
<rect x="1141.6" y="570.5" width="4.4" height="4" fill="#40e0ff" />
<rect x="866.7" y="570.5" width="5.0" height="4" fill="#0a1aa0" />
<rect x="1174.0" y="570.5" width="2.5" height="4" fill="#0a1aa0" />
<rect x="1144.5" y="570.5" width="1.6" height="4" fill="#40e0ff" />
<rect x="979.0" y="570.5" width="3.1" height="4" fill="#40e0ff" />
<rect x="885.2" y="570.5" width="1.8" height="4" fill="#0a1aa0" />
<rect x="1069.4" y="570.5" width="1.9" height="4" fill="#0a1aa0" />
<rect x="1009.3" y="570.5" width="4.8" height="4" fill="#40e0ff" />
<rect x="945.0" y="570.5" width="1.2" height="4" fill="#40e0ff" />
<rect x="1222.0" y="570.5" width="2.5" height="4" fill="#40e0ff" />
<rect x="869.1" y="570.5" width="3.2" height="4" fill="#0a1aa0" />
<rect x="1032.1" y="570.5" width="4.4" height="4" fill="#40e0ff" />
<rect x="1172.8" y="570.5" width="3.6" height="4" fill="#40e0ff" />
<rect x="1114.2" y="570.5" width="1.4" height="4" fill="#0a1aa0" />
<rect x="1061.1" y="570.5" width="3.6" height="4" fill="#0a1aa0" />
<rect x="918.3" y="570.5" width="4.4" height="4" fill="#0a1aa0" />
<rect x="1211.2" y="570.5" width="5.0" height="4" fill="#40e0ff" />
<rect x="914.4" y="570.5" width="4.8" height="4" fill="#0a1aa0" />
<rect x="872.2" y="570.5" width="3.2" height="4" fill="#40e0ff" />
<rect x="1163.1" y="570.5" width="1.2" height="4" fill="#0a1aa0" />
<rect x="851" y="575" width="375" height="170" fill="#ecb800" />
<rect x="875.4" y="579" width="1.4" height="160" fill="#e4a800" />
<rect x="1197.9" y="579" width="2.7" height="160" fill="#e0a400" />
<rect x="1070.3" y="579" width="2.1" height="160" fill="#e4a800" />
<rect x="1026.8" y="579" width="1.9" height="160" fill="#f2be00" />
<rect x="900.3" y="579" width="2.2" height="160" fill="#f6c800" />
<rect x="1016.1" y="579" width="3.0" height="160" fill="#e4a800" />
<rect x="1025.8" y="579" width="3.3" height="160" fill="#e4a800" />
<rect x="912.3" y="579" width="3.1" height="160" fill="#e4a800" />
<rect x="1195.9" y="579" width="3.2" height="160" fill="#f6c800" />
<rect x="1139.1" y="579" width="3.4" height="160" fill="#f2be00" />
<rect x="1162.4" y="579" width="2.6" height="160" fill="#f2be00" />
<rect x="1209.9" y="579" width="1.8" height="160" fill="#f6c800" />
<rect x="1029.3" y="579" width="2.6" height="160" fill="#f6c800" />
<rect x="976.2" y="579" width="2.8" height="160" fill="#f6c800" />
<rect x="1115.5" y="579" width="2.4" height="160" fill="#f6c800" />
<rect x="1015.2" y="579" width="1.4" height="160" fill="#f2be00" />
<rect x="1005.3" y="579" width="1.4" height="160" fill="#e0a400" />
<rect x="1063.4" y="579" width="1.7" height="160" fill="#f6c800" />
<rect x="950.1" y="579" width="1.3" height="160" fill="#f2be00" />
<rect x="1184.7" y="579" width="1.3" height="160" fill="#dca000" />
<rect x="875.8" y="579" width="3.2" height="160" fill="#f6c800" />
<rect x="1059.4" y="579" width="3.1" height="160" fill="#e4a800" />
<rect x="949.1" y="579" width="1.5" height="160" fill="#e0a400" />
<rect x="1012.7" y="579" width="1.7" height="160" fill="#f6c800" />
<rect x="1192.7" y="579" width="1.2" height="160" fill="#e0a400" />
<rect x="1006.7" y="579" width="1.4" height="160" fill="#e0a400" />
<rect x="907.7" y="579" width="2.6" height="160" fill="#f2be00" />
<rect x="1149.6" y="579" width="1.9" height="160" fill="#f6c800" />
<rect x="1016.7" y="579" width="3.0" height="160" fill="#dca000" />
<rect x="959.5" y="579" width="1.9" height="160" fill="#e4a800" />
<rect x="1187.9" y="579" width="1.5" height="160" fill="#dca000" />
<rect x="921.0" y="579" width="3.1" height="160" fill="#dca000" />
<rect x="1136.2" y="579" width="2.8" height="160" fill="#f6c800" />
<rect x="1074.2" y="579" width="3.1" height="160" fill="#dca000" />
<rect x="1121.8" y="579" width="2.9" height="160" fill="#f6c800" />
<rect x="930.2" y="579" width="2.5" height="160" fill="#f6c800" />
<rect x="1067.8" y="579" width="1.5" height="160" fill="#e4a800" />
<rect x="1107.7" y="579" width="2.3" height="160" fill="#e4a800" />
<rect x="1044.2" y="579" width="1.9" height="160" fill="#e0a400" />
<rect x="1162.3" y="579" width="3.2" height="160" fill="#f2be00" />
<rect x="888.0" y="579" width="2.0" height="160" fill="#f2be00" />
<rect x="903.6" y="579" width="2.7" height="160" fill="#f6c800" />
<rect x="922.9" y="579" width="3.1" height="160" fill="#e0a400" />
<rect x="868.4" y="579" width="2.8" height="160" fill="#dca000" />
<rect x="1072.1" y="579" width="1.0" height="160" fill="#dca000" />
<rect x="1195.2" y="579" width="3.4" height="160" fill="#e4a800" />
<rect x="899.1" y="579" width="2.8" height="160" fill="#e0a400" />
<rect x="1139.4" y="579" width="3.2" height="160" fill="#dca000" />
<rect x="1129.2" y="579" width="1.2" height="160" fill="#e4a800" />
<rect x="1203.2" y="579" width="2.2" height="160" fill="#dca000" />
<rect x="864.4" y="579" width="3.0" height="160" fill="#f6c800" />
<rect x="862.6" y="579" width="3.4" height="160" fill="#f6c800" />
<rect x="1081.0" y="579" width="1.4" height="160" fill="#e0a400" />
<rect x="946.4" y="579" width="3.0" height="160" fill="#e4a800" />
<rect x="862.1" y="579" width="3.3" height="160" fill="#f6c800" />
<rect x="950.4" y="579" width="3.1" height="160" fill="#dca000" />
<rect x="1024.3" y="579" width="1.6" height="160" fill="#f2be00" />
<rect x="892.5" y="579" width="3.2" height="160" fill="#f6c800" />
<rect x="871.5" y="579" width="1.3" height="160" fill="#f2be00" />
<rect x="1068.9" y="579" width="2.9" height="160" fill="#e4a800" />
<rect x="899.5" y="579" width="2.0" height="160" fill="#f6c800" />
<rect x="1052.7" y="579" width="1.6" height="160" fill="#f6c800" />
<rect x="908.7" y="579" width="2.4" height="160" fill="#f2be00" />
<rect x="915.0" y="579" width="3.1" height="160" fill="#f2be00" />
<rect x="1108.3" y="579" width="2.5" height="160" fill="#dca000" />
<rect x="1046.8" y="579" width="2.0" height="160" fill="#e4a800" />
<rect x="1138.6" y="579" width="1.8" height="160" fill="#f6c800" />
<rect x="1161.1" y="579" width="2.8" height="160" fill="#dca000" />
<rect x="1148.6" y="579" width="3.3" height="160" fill="#f2be00" />
<rect x="1164.4" y="579" width="1.1" height="160" fill="#dca000" />
<rect x="908.5" y="579" width="2.7" height="160" fill="#e0a400" />
<rect x="946.0" y="579" width="2.1" height="160" fill="#e4a800" />
<rect x="988.0" y="579" width="2.3" height="160" fill="#e4a800" />
<rect x="973.4" y="579" width="1.5" height="160" fill="#e4a800" />
<rect x="937.3" y="579" width="2.1" height="160" fill="#f2be00" />
<rect x="1138.5" y="579" width="3.3" height="160" fill="#e4a800" />
<rect x="1150.4" y="579" width="3.2" height="160" fill="#e4a800" />
<rect x="867.5" y="579" width="2.6" height="160" fill="#e0a400" />
<rect x="1190.0" y="579" width="2.6" height="160" fill="#dca000" />
<rect x="1149.3" y="579" width="1.1" height="160" fill="#e4a800" />
<rect x="946.5" y="579" width="2.3" height="160" fill="#f2be00" />
<rect x="941.4" y="579" width="1.1" height="160" fill="#e4a800" />
<rect x="966.5" y="579" width="2.6" height="160" fill="#e4a800" />
<rect x="877.0" y="579" width="3.4" height="160" fill="#dca000" />
<rect x="1184.0" y="579" width="1.2" height="160" fill="#dca000" />
<rect x="1049.8" y="579" width="1.4" height="160" fill="#e4a800" />
<rect x="1041.7" y="579" width="3.2" height="160" fill="#f2be00" />
<rect x="1065.7" y="579" width="1.7" height="160" fill="#e4a800" />
<rect x="1125.2" y="579" width="1.7" height="160" fill="#f2be00" />
<rect x="1077.6" y="579" width="2.4" height="160" fill="#f2be00" />
<rect x="928.4" y="579" width="2.8" height="160" fill="#f2be00" />
<rect x="1180.5" y="579" width="1.8" height="160" fill="#f2be00" />
<rect x="1026.2" y="579" width="1.8" height="160" fill="#f6c800" />
<rect x="976.8" y="579" width="1.5" height="160" fill="#dca000" />
<rect x="994.9" y="579" width="2.5" height="160" fill="#e4a800" />
<rect x="1192.3" y="579" width="1.4" height="160" fill="#f6c800" />
<rect x="973.2" y="579" width="1.8" height="160" fill="#e0a400" />
<rect x="959.0" y="579" width="3.5" height="160" fill="#e0a400" />
<rect x="875.8" y="579" width="1.1" height="160" fill="#dca000" />
<rect x="879.4" y="579" width="3.2" height="160" fill="#f2be00" />
<rect x="1095.1" y="579" width="2.3" height="160" fill="#f2be00" />
<rect x="984.3" y="579" width="2.9" height="160" fill="#dca000" />
<rect x="937.2" y="579" width="3.4" height="160" fill="#f6c800" />
<rect x="1007.1" y="579" width="2.7" height="160" fill="#f6c800" />
<rect x="1101.5" y="579" width="2.5" height="160" fill="#e0a400" />
<rect x="1154.7" y="579" width="2.3" height="160" fill="#f2be00" />
<rect x="953.1" y="579" width="2.6" height="160" fill="#f6c800" />
<rect x="1005.8" y="579" width="1.3" height="160" fill="#f2be00" />
<rect x="1134.5" y="579" width="2.5" height="160" fill="#f2be00" />
<rect x="1000.1" y="579" width="3.5" height="160" fill="#f6c800" />
<rect x="1007.5" y="579" width="3.0" height="160" fill="#dca000" />
<rect x="1076.7" y="579" width="1.9" height="160" fill="#f2be00" />
<rect x="1107.8" y="579" width="1.7" height="160" fill="#e0a400" />
<rect x="961.9" y="579" width="2.0" height="160" fill="#dca000" />
<rect x="1072.3" y="579" width="2.6" height="160" fill="#e4a800" />
<rect x="1142.3" y="579" width="3.1" height="160" fill="#f2be00" />
<rect x="993.9" y="579" width="1.8" height="160" fill="#dca000" />
<rect x="966.0" y="579" width="1.4" height="160" fill="#dca000" />
<rect x="992.6" y="579" width="1.6" height="160" fill="#e0a400" />
<rect x="973.2" y="579" width="3.1" height="160" fill="#f6c800" />
<rect x="851" y="575" width="3" height="170" fill="#f2ea00" />
<rect x="851" y="575" width="375" height="4" fill="#f2ea00" />
<rect x="1222" y="575" width="4" height="170" fill="#f2ea00" />
<rect x="851" y="739" width="375" height="6" fill="#f2ea00" />
<rect x="851" y="745" width="375" height="5" fill="#10e410" />
<rect x="851" y="750" width="375" height="3.5" fill="#2a40f4" />
<rect x="851" y="753.5" width="375" height="3" fill="#0a1a9a" />
<rect x="1226" y="722.5" width="64" height="2" fill="#2438e8" />
<rect x="1285.4" y="722.5" width="5.5" height="2" fill="#5070ff" />
<rect x="1281.3" y="722.5" width="14.5" height="2" fill="#000" />
<rect x="1226" y="725" width="64" height="5" fill="#f0d800" />
<rect x="1228.9" y="725" width="3.7" height="5" fill="#f0b000" />
<rect x="1244.6" y="725" width="3.6" height="5" fill="#f0b000" />
<rect x="1259.4" y="725" width="5.0" height="5" fill="#f8e040" />
<rect x="1277.2" y="725" width="4.2" height="5" fill="#f0b000" />
<rect x="1250.2" y="725" width="3.1" height="5" fill="#f8e040" />
<rect x="1267.9" y="725" width="3.4" height="5" fill="#f8f000" />
<rect x="1267.9" y="725" width="3.6" height="5" fill="#f8f000" />
<rect x="1251.4" y="725" width="3.5" height="5" fill="#f8e040" />
<rect x="1226" y="730" width="64" height="14.3" fill="#f60000" />
<rect x="1226" y="744" width="64" height="1" fill="#c02080" />
<rect x="1226" y="745" width="64" height="4" fill="#2030f0" />
<rect x="1260.8" y="745" width="2.7" height="4" fill="#4060ff" />
<rect x="1285.8" y="745" width="2.5" height="4" fill="#1020c0" />
<rect x="1273.6" y="745" width="3.7" height="4" fill="#1020c0" />
<rect x="1268.9" y="745" width="3.2" height="4" fill="#4060ff" />
<rect x="1236.6" y="745" width="2.0" height="4" fill="#4060ff" />
<rect x="1226" y="749" width="64" height="1.5" fill="#0a1a9a" />
<polygon points="7.5,259.5 30.5,259.5 40,270 30.5,280 7.5,280" fill="#e8d000" stroke="#f8f000" stroke-width="1.5" />
<path d="M21.5,268.5 L24.5,265 L26.5,265 L26.5,278 L24,278 L24,268.5 L22.5,270 Z" fill="#000"/>
<polygon points="7.5,649 30.5,649 40,659 30.5,669 7.5,669" fill="#f08000" stroke="#f8a030" stroke-width="1" />
<rect x="20" y="654" width="8.5" height="2.6" fill="#401000" />
<rect x="23" y="654" width="2.6" height="14" fill="#401000" />
<polygon points="7.5,731 30.5,731 40,741 30.5,751 7.5,751" fill="#000" stroke="#40d0e0" stroke-width="1.5" />
<text x="23.5" y="749" font-size="16" fill="#90e0e0" text-anchor="middle" font-weight="normal" >2</text>
<rect x="42" y="726" width="4" height="19" fill="#7a3818" />
<rect x="42" y="724" width="4" height="3" fill="#f0c080" />
<polygon points="45.5,724 57,714 255.5,714 255.5,770 243,782.5 45.5,782.5" fill="#000" stroke="#4c5753" stroke-width="2" />
<rect x="100" y="717" width="145" height="63.5" fill="#2a0000" />
<text x="106.5" y="743.5" font-size="18.5" fill="#a0d8c8" text-anchor="start" font-weight="normal" textLength="50" lengthAdjust="spacingAndGlyphs" >Freq2</text>
<text x="106.5" y="774.5" font-size="19" fill="#f8e0d8" text-anchor="start" font-weight="normal" textLength="90" lengthAdjust="spacingAndGlyphs" >333.33kHz</text>
<defs><linearGradient id="pg" x1="0" y1="0" x2="0" y2="1"><stop offset="0" stop-color="#252827"/><stop offset="1" stop-color="#0e1110"/></linearGradient></defs>
<text x="19" y="61" style="font-family:'Liberation Serif',serif" font-size="54" font-weight="bold" fill="#f2ee10" stroke="#f2ee10" stroke-width="1.6" textLength="166" lengthAdjust="spacingAndGlyphs">RIGOL</text>
<ellipse cx="240" cy="43" rx="46" ry="20" fill="#151716"/>
<text x="240.5" y="54.5" font-size="25" fill="#d83848" text-anchor="middle" font-weight="bold" textLength="70" lengthAdjust="spacingAndGlyphs" >STOP</text>
<polygon points="297.5,12 615,12 636.5,44 636.5,71.5 297.5,71.5" fill="url(#pg)" stroke="#3a3e3b" stroke-width="1.8" stroke-linejoin="round"/>
<polygon points="349.5,16.5 612,16.5 631,44.5 631,67 349.5,67" fill="#000" stroke="#2b2e2c" stroke-width="1.5" />
<rect x="313.5" y="27" width="4.6" height="29" fill="#dca060" stroke="#301000" stroke-width="0.8"/>
<rect x="331.5" y="27" width="4.6" height="29" fill="#dca060" stroke="#301000" stroke-width="0.8"/>
<rect x="318.1" y="40" width="13.4" height="4.2" fill="#f08800" />
<text x="368.5" y="53" font-size="30" fill="#dcdcd4" text-anchor="start" font-weight="normal" textLength="91" lengthAdjust="spacingAndGlyphs" >50.0ms</text>
<text x="592" y="39.5" font-size="23" fill="#a8aca6" text-anchor="end" font-weight="normal" textLength="97" lengthAdjust="spacingAndGlyphs" >250MSa/s</text>
<text x="603.5" y="60.3" font-size="23" fill="#a8aca6" text-anchor="end" font-weight="normal" textLength="85" lengthAdjust="spacingAndGlyphs" >125Mpts</text>
<polyline points="637,27.5 629,19 629,12 960.5,12 960.5,18 950,28.5" fill="none" stroke="#9aa09c" stroke-width="2" stroke-linejoin="round"/>
<line x1="637" y1="28.5" x2="950" y2="28.5" stroke="#a09882" stroke-width="1.8" />
<polyline points="639.4,25.4 646.9,18.6 654.4,25.4 661.9,18.6 669.4,25.4 676.9,18.6 684.4,25.4 691.9,18.6 699.4,25.4 706.9,18.6 714.4,25.4 721.9,18.6 729.4,25.4 736.9,18.6 744.4,25.4 751.9,18.6 759.4,25.4 766.9,18.6 774.4,25.4 781.9,18.6 789.4,25.4 796.9,18.6 804.4,25.4 811.9,18.6 819.4,25.4 826.9,18.6 834.4,25.4 841.9,18.6 849.4,25.4 856.9,18.6 864.4,25.4 871.9,18.6 879.4,25.4 886.9,18.6 894.4,25.4 901.9,18.6 909.4,25.4 916.9,18.6 924.4,25.4 931.9,18.6 939.4,25.4 946.9,18.6" fill="none" stroke="#f4f6f4" stroke-width="1.8" stroke-linejoin="round"/>
<polygon points="758,15.5 772,15.5 765.5,23" fill="#f08810" stroke="none" stroke-width="0" />
<polygon points="784.5,85.5 802,85.5 793.3,95" fill="none" stroke="#c08838" stroke-width="1.8" />
<polygon points="648,34.5 769,34.5 781,47.5 781,77.5 648,77.5" fill="#000" stroke="#5a5e5a" stroke-width="2.2" stroke-linejoin="round"/>
<polygon points="653,39.5 766,39.5 776,50 776,73 653,73" fill="none" stroke="#141614" stroke-width="1" />
<text x="714.3" y="62.5" font-size="21" fill="#eef020" text-anchor="middle" font-weight="normal" textLength="106" lengthAdjust="spacingAndGlyphs" stroke="#eef020" stroke-width="0.6">MEASURE</text>
<polygon points="820,34.5 940,34.5 940,77.5 807,77.5 807,47.5" fill="#000" stroke="#5a5e5a" stroke-width="2.2" stroke-linejoin="round"/>
<polygon points="823,39.5 935,39.5 935,73 812,73 812,50" fill="none" stroke="#141614" stroke-width="1" />
<defs><filter id="blr" x="-20%" y="-50%" width="140%" height="200%"><feGaussianBlur stdDeviation="0.6"/></filter><filter id="blr3" x="-20%" y="-50%" width="140%" height="200%"><feGaussianBlur stdDeviation="2.5"/></filter></defs>
<rect x="818" y="49" width="108" height="14" fill="#500000" filter="url(#blr3)"/>
<text x="872" y="62.8" font-size="20" fill="#d42020" text-anchor="middle" font-weight="normal" textLength="109" lengthAdjust="spacingAndGlyphs" filter="url(#blr)">STOP/RUN</text>
<polygon points="977,12 1238.5,12 1238.5,71.5 952.5,71.5 952.5,38" fill="url(#pg)" stroke="#3a3e3b" stroke-width="1.8" stroke-linejoin="round"/>
<polygon points="1013,16.5 1234,16.5 1234,67 1013,67" fill="#000" stroke="#2b2e2c" stroke-width="1.5" />
<text x="987.5" y="57" font-size="40" fill="#f09010" text-anchor="middle" font-weight="normal" textLength="25" lengthAdjust="spacingAndGlyphs" stroke="#f09010" stroke-width="1.3">D</text>
<text x="1030" y="55" font-size="31" fill="#dcdcd4" text-anchor="start" font-weight="normal" textLength="92" lengthAdjust="spacingAndGlyphs" >48.0ms</text>
<polygon points="1246.5,12 1525,12 1542,25 1542,71.5 1246.5,71.5" fill="url(#pg)" stroke="#3a3e3b" stroke-width="1.8" stroke-linejoin="round"/>
<polygon points="1293.5,16 1520,16 1537,28 1537,67.5 1293.5,67.5" fill="#000" stroke="#2b2e2c" stroke-width="1.5" />
<rect x="1257" y="25" width="24.6" height="5" fill="#f09830" stroke="#301000" stroke-width="0.8"/>
<rect x="1267" y="30" width="5" height="24.5" fill="#dca060" stroke="#301000" stroke-width="0.8"/>
<path d="M1331.5,51 H1339.5 V45 M1340.5,36 V32.5 H1346.5" fill="none" stroke="#20d8e8" stroke-width="2"/>
<path d="M1331.5,46 H1348.5 C1347.5,40.5 1344.5,35.5 1340,35 C1335.5,35.5 1332.5,40.5 1331.5,46 Z" fill="#20d8e8"/>
<rect x="1378.5" y="33.5" width="18" height="18.5" fill="#20d0e0" rx="2"/>
<text x="1387.5" y="49.5" font-size="15" fill="#000" text-anchor="middle" font-weight="bold" >2</text>
<text x="1412" y="51.5" font-size="23" fill="#94e4dc" text-anchor="start" font-weight="normal" textLength="54" lengthAdjust="spacingAndGlyphs" >1.83V</text>
<text x="1514" y="52" font-size="22.5" fill="#b0e060" text-anchor="middle" font-weight="normal" textLength="14" lengthAdjust="spacingAndGlyphs" >A</text>
<defs><linearGradient id="rg" x1="1245" x2="1546" gradientUnits="userSpaceOnUse"><stop offset="0" stop-color="#b80000"/><stop offset="0.6" stop-color="#900000"/><stop offset="1" stop-color="#300000"/></linearGradient><linearGradient id="rgb" x1="1292" x2="1546" gradientUnits="userSpaceOnUse"><stop offset="0" stop-color="#d00000"/><stop offset="0.5" stop-color="#900000"/><stop offset="1" stop-color="#200000"/></linearGradient><linearGradient id="chg" x1="0" y1="0" x2="1" y2="1"><stop offset="0" stop-color="#6a6d6a"/><stop offset="1" stop-color="#3a3d3a"/></linearGradient><linearGradient id="tg" x1="0" x2="1"><stop offset="0" stop-color="#b8bcb8"/><stop offset="1" stop-color="#666c66"/></linearGradient></defs>
<polygon points="1546,77.5 1269,77.5 1245.5,100.5 1245.5,226 1292,271 1292,846 1546,846" fill="#000"/>
<polyline points="1546,77.5 1269,77.5 1245.5,100.5 1245.5,226 1292,271" fill="none" stroke="url(#rg)" stroke-width="3"/>
<polyline points="1292,270 1292,836 1302,846 1546,846" fill="none" stroke="url(#rgb)" stroke-width="3.5"/>
<line x1="1292.5" y1="271" x2="1292.5" y2="836" stroke="#a00000" stroke-width="5" />
<line x1="1292.5" y1="271" x2="1292.5" y2="836" stroke="#c80000" stroke-width="2" />
<text x="0" y="0" font-size="27" fill="#e0dc20" text-anchor="middle" font-weight="normal" textLength="41" lengthAdjust="spacingAndGlyphs" transform="translate(1265,171.5) rotate(90)">CH1</text>
<polygon points="1299.5,82.5 1512,82.5 1542,111.5 1542,179.5 1299.5,179.5" fill="#000" stroke="#3e413e" stroke-width="2" />
<line x1="1299.5" y1="83.5" x2="1512" y2="83.5" stroke="#80837e" stroke-width="2.5" />
<line x1="1300.5" y1="82.5" x2="1300.5" y2="179.5" stroke="#5c5f5a" stroke-width="2" />
<polygon points="1512,82.5 1542,111.5 1542,104.5 1520,82.5" fill="url(#chg)" stroke="none" stroke-width="0" />
<text x="1311.5" y="110.5" font-size="25.5" fill="#d4d4cc" text-anchor="start" font-weight="normal" >Coupling</text>
<text x="1512" y="155.5" font-size="25.5" fill="#d4d4cc" text-anchor="end" font-weight="normal" >DC</text>
<polyline points="1516,134.5 1530,147.5 1516,160.5" fill="none" stroke="#b8bab4" stroke-width="2.5"/>
<polygon points="1299.5,192.5 1512,192.5 1542,221.5 1542,289.5 1299.5,289.5" fill="#000" stroke="#3e413e" stroke-width="2" />
<line x1="1299.5" y1="193.5" x2="1512" y2="193.5" stroke="#80837e" stroke-width="2.5" />
<line x1="1300.5" y1="192.5" x2="1300.5" y2="289.5" stroke="#5c5f5a" stroke-width="2" />
<polygon points="1512,192.5 1542,221.5 1542,214.5 1520,192.5" fill="url(#chg)" stroke="none" stroke-width="0" />
<text x="1311.5" y="220.5" font-size="25.5" fill="#d4d4cc" text-anchor="start" font-weight="normal" >BW Limit</text>
<text x="1512" y="265.5" font-size="25.5" fill="#d4d4cc" text-anchor="end" font-weight="normal" >OFF</text>
<polyline points="1516,244.5 1530,257.5 1516,270.5" fill="none" stroke="#b8bab4" stroke-width="2.5"/>
<polygon points="1299.5,302.5 1512,302.5 1542,331.5 1542,399.5 1299.5,399.5" fill="#000" stroke="#3e413e" stroke-width="2" />
<line x1="1299.5" y1="303.5" x2="1512" y2="303.5" stroke="#80837e" stroke-width="2.5" />
<line x1="1300.5" y1="302.5" x2="1300.5" y2="399.5" stroke="#5c5f5a" stroke-width="2" />
<polygon points="1512,302.5 1542,331.5 1542,324.5 1520,302.5" fill="url(#chg)" stroke="none" stroke-width="0" />
<text x="1311.5" y="330.5" font-size="25.5" fill="#d4d4cc" text-anchor="start" font-weight="normal" >Attenuation</text>
<text x="1512" y="375.5" font-size="25.5" fill="#d4d4cc" text-anchor="end" font-weight="normal" >10X</text>
<polyline points="1516,354.5 1530,367.5 1516,380.5" fill="none" stroke="#b8bab4" stroke-width="2.5"/>
<polygon points="1299.5,412.5 1512,412.5 1542,441.5 1542,509.5 1299.5,509.5" fill="#000" stroke="#3e413e" stroke-width="2" />
<line x1="1299.5" y1="413.5" x2="1512" y2="413.5" stroke="#80837e" stroke-width="2.5" />
<line x1="1300.5" y1="412.5" x2="1300.5" y2="509.5" stroke="#5c5f5a" stroke-width="2" />
<polygon points="1512,412.5 1542,441.5 1542,434.5 1520,412.5" fill="url(#chg)" stroke="none" stroke-width="0" />
<text x="1311.5" y="440.5" font-size="25.5" fill="#d4d4cc" text-anchor="start" font-weight="normal" >Impedance</text>
<text x="1527" y="485.5" font-size="25.5" fill="#d4d4cc" text-anchor="end" font-weight="normal" >1M&#937;</text>
<polygon points="1299.5,522.5 1512,522.5 1542,551.5 1542,619.5 1299.5,619.5" fill="#000" stroke="#3e413e" stroke-width="2" />
<line x1="1299.5" y1="523.5" x2="1512" y2="523.5" stroke="#80837e" stroke-width="2.5" />
<line x1="1300.5" y1="522.5" x2="1300.5" y2="619.5" stroke="#5c5f5a" stroke-width="2" />
<polygon points="1512,522.5 1542,551.5 1542,544.5 1520,522.5" fill="url(#chg)" stroke="none" stroke-width="0" />
<text x="1311.5" y="550.5" font-size="25.5" fill="#d4d4cc" text-anchor="start" font-weight="normal" >Invert</text>
<polygon points="1299.5,632.5 1512,632.5 1542,661.5 1542,729.5 1299.5,729.5" fill="#000" stroke="#3e413e" stroke-width="2" />
<line x1="1299.5" y1="633.5" x2="1512" y2="633.5" stroke="#80837e" stroke-width="2.5" />
<line x1="1300.5" y1="632.5" x2="1300.5" y2="729.5" stroke="#5c5f5a" stroke-width="2" />
<polygon points="1512,632.5 1542,661.5 1542,654.5 1520,632.5" fill="url(#chg)" stroke="none" stroke-width="0" />
<text x="1512" y="691.5" font-size="25.5" fill="#d4d4cc" text-anchor="end" font-weight="normal" >Probe</text>
<polyline points="1516,670.5 1530,683.5 1516,696.5" fill="none" stroke="#b8bab4" stroke-width="2.5"/>
<polygon points="1299.5,742.5 1512,742.5 1542,771.5 1542,839.5 1299.5,839.5" fill="#000" stroke="#3e413e" stroke-width="2" />
<line x1="1299.5" y1="743.5" x2="1512" y2="743.5" stroke="#80837e" stroke-width="2.5" />
<line x1="1300.5" y1="742.5" x2="1300.5" y2="839.5" stroke="#5c5f5a" stroke-width="2" />
<polygon points="1512,742.5 1542,771.5 1542,764.5 1520,742.5" fill="url(#chg)" stroke="none" stroke-width="0" />
<text x="1512" y="801.5" font-size="25.5" fill="#d4d4cc" text-anchor="end" font-weight="normal" >More</text>
<polyline points="1516,780.5 1530,793.5 1516,806.5" fill="none" stroke="#b8bab4" stroke-width="2.5"/>
<rect x="1461" y="570.5" width="67" height="33" fill="url(#tg)" rx="16.5" stroke="#d0d4d0" stroke-width="1.5"/>
<circle cx="1478" cy="587" r="18" fill="#101210"/>
<circle cx="1477.5" cy="587" r="16" fill="#c2c6c4" stroke="#eef0ee" stroke-width="2"/>
<defs><linearGradient id="lbg" x1="0" y1="0" x2="0" y2="1"><stop offset="0" stop-color="#222524"/><stop offset="1" stop-color="#121413"/></linearGradient></defs>
<path d="M41,822.5 L54,822.5 C66,825 77,835 81.5,849 L81.5,866 C77,880 66,890 54,892.5 L41,892.5 C29,890 18,880 13.5,866 L13.5,849 C18,835 29,825 41,822.5 Z" fill="#000" stroke="#4a4e4b" stroke-width="2.5"/>
<path d="M42,826 L53,826 C64,828.5 73.5,837.5 78,850 L78,865 C73.5,877.5 64,886.5 53,889 L42,889 C31,886.5 21.5,877.5 17,865 L17,850 C21.5,837.5 31,828.5 42,826 Z" fill="none" stroke="#1c1e1d" stroke-width="2"/>
<rect x="30.5" y="840.5" width="16" height="16" fill="#380000" rx="4"/>
<rect x="32.5" y="842.5" width="12" height="12" fill="#e01818" rx="2" stroke="#ff5050" stroke-width="0.6"/>
<rect x="48.8" y="840.5" width="16" height="16" fill="#380000" rx="4"/>
<rect x="50.8" y="842.5" width="12" height="12" fill="#e01818" rx="2" stroke="#ff5050" stroke-width="0.6"/>
<rect x="30.5" y="858.5" width="16" height="16" fill="#380000" rx="4"/>
<rect x="32.5" y="860.5" width="12" height="12" fill="#e01818" rx="2" stroke="#ff5050" stroke-width="0.6"/>
<rect x="48.8" y="858.5" width="16" height="16" fill="#380000" rx="4"/>
<rect x="50.8" y="860.5" width="12" height="12" fill="#e01818" rx="2" stroke="#ff5050" stroke-width="0.6"/>
<polygon points="90,823.5 278,823.5 291.5,837 291.5,891 90,891" fill="#000" stroke="#f0e400" stroke-width="2.5" />
<polygon points="278,823.5 291.5,837 291.5,830 284,823.5" fill="#f0e400" stroke="none" stroke-width="0" />
<rect x="90" y="823" width="46" height="69" fill="#e8d400" />
<path d="M106,848.5 L113.5,841 L119.5,841 L119.5,869 L113.5,869 L113.5,849 L108,853 Z" fill="#000"/>
<rect x="143" y="837.5" width="19" height="2.5" fill="#f0f020" />
<rect x="143.0" y="844.5" width="2.5" height="2.5" fill="#f0f020" />
<rect x="148.3" y="844.5" width="2.5" height="2.5" fill="#f0f020" />
<rect x="153.6" y="844.5" width="2.5" height="2.5" fill="#f0f020" />
<rect x="158.9" y="844.5" width="2.5" height="2.5" fill="#f0f020" />
<text x="233" y="852.5" font-size="23.5" fill="#f0f040" text-anchor="end" font-weight="normal" textLength="61" lengthAdjust="spacingAndGlyphs" >2.00V</text>
<text x="276" y="881" font-size="23.5" fill="#f0f040" text-anchor="end" font-weight="normal" textLength="76" lengthAdjust="spacingAndGlyphs" >+3.92V</text>
<polygon points="299.5,822.5 486.5,822.5 503.5,839 503.5,892 299.5,892" fill="#000" stroke="#3a3d3b" stroke-width="2" />
<polygon points="486.5,822.5 503.5,839 503.5,832 493.5,822.5" fill="#2a2d2b" stroke="none" stroke-width="0" />
<rect x="300.5" y="823.5" width="46" height="68" fill="url(#lbg)" />
<line x1="346.5" y1="823.5" x2="346.5" y2="891.5" stroke="#3a3d3b" stroke-width="1.5" />
<text x="322.5" y="870" font-size="41" fill="#30e0f0" text-anchor="middle" font-weight="bold" textLength="21" lengthAdjust="spacingAndGlyphs" >2</text>
<rect x="352.5" y="837.5" width="19" height="2.5" fill="#60e0e0" />
<rect x="352.5" y="844.5" width="2.5" height="2.5" fill="#60e0e0" />
<rect x="357.8" y="844.5" width="2.5" height="2.5" fill="#60e0e0" />
<rect x="363.1" y="844.5" width="2.5" height="2.5" fill="#60e0e0" />
<rect x="368.4" y="844.5" width="2.5" height="2.5" fill="#60e0e0" />
<text x="382.5" y="853" font-size="23.5" fill="#60e0e0" text-anchor="start" font-weight="normal" textLength="62" lengthAdjust="spacingAndGlyphs" >2.00V</text>
<text x="485.5" y="881" font-size="23.5" fill="#60e0e0" text-anchor="end" font-weight="normal" textLength="70" lengthAdjust="spacingAndGlyphs" >-6.56V</text>
<polygon points="509.5,822.5 696.5,822.5 713.5,839 713.5,892 509.5,892" fill="#000" stroke="#3a3d3b" stroke-width="2" />
<polygon points="696.5,822.5 713.5,839 713.5,832 703.5,822.5" fill="#2a2d2b" stroke="none" stroke-width="0" />
<rect x="510.5" y="823.5" width="46" height="68" fill="url(#lbg)" />
<line x1="556.5" y1="823.5" x2="556.5" y2="891.5" stroke="#3a3d3b" stroke-width="1.5" />
<text x="532.5" y="870" font-size="41" fill="#000" text-anchor="middle" font-weight="bold" textLength="21" lengthAdjust="spacingAndGlyphs" >3</text>
<rect x="562.5" y="837.5" width="19" height="2.5" fill="#b8b4a8" />
<rect x="562.5" y="844.5" width="2.5" height="2.5" fill="#b8b4a8" />
<rect x="567.8" y="844.5" width="2.5" height="2.5" fill="#b8b4a8" />
<rect x="573.1" y="844.5" width="2.5" height="2.5" fill="#b8b4a8" />
<rect x="578.4" y="844.5" width="2.5" height="2.5" fill="#b8b4a8" />
<text x="592.5" y="853" font-size="23.5" fill="#b8b4a8" text-anchor="start" font-weight="normal" textLength="83" lengthAdjust="spacingAndGlyphs" >50.0mV</text>
<text x="695.5" y="881" font-size="23.5" fill="#b8b4a8" text-anchor="end" font-weight="normal" textLength="86" lengthAdjust="spacingAndGlyphs" >-100mV</text>
<polygon points="719.5,822.5 906.5,822.5 923.5,839 923.5,892 719.5,892" fill="#000" stroke="#3a3d3b" stroke-width="2" />
<polygon points="906.5,822.5 923.5,839 923.5,832 913.5,822.5" fill="#2a2d2b" stroke="none" stroke-width="0" />
<rect x="720.5" y="823.5" width="46" height="68" fill="url(#lbg)" />
<line x1="766.5" y1="823.5" x2="766.5" y2="891.5" stroke="#3a3d3b" stroke-width="1.5" />
<text x="742.5" y="870" font-size="41" fill="#000" text-anchor="middle" font-weight="bold" textLength="21" lengthAdjust="spacingAndGlyphs" >4</text>
<rect x="772.5" y="837.5" width="19" height="2.5" fill="#b8b4a8" />
<rect x="772.5" y="844.5" width="2.5" height="2.5" fill="#b8b4a8" />
<rect x="777.8" y="844.5" width="2.5" height="2.5" fill="#b8b4a8" />
<rect x="783.1" y="844.5" width="2.5" height="2.5" fill="#b8b4a8" />
<rect x="788.4" y="844.5" width="2.5" height="2.5" fill="#b8b4a8" />
<text x="802.5" y="853" font-size="23.5" fill="#b8b4a8" text-anchor="start" font-weight="normal" textLength="79" lengthAdjust="spacingAndGlyphs" >100mV</text>
<text x="905.5" y="881" font-size="23.5" fill="#b8b4a8" text-anchor="end" font-weight="normal" textLength="64" lengthAdjust="spacingAndGlyphs" >0.00V</text>
<polygon points="930,822.5 1113,822.5 1124,832 1124,892 930,892" fill="#000" stroke="#4a4d4b" stroke-width="2" />
<rect x="931" y="823.5" width="43" height="68" fill="url(#lbg)" />
<text x="955" y="865" font-size="35" fill="#050605" text-anchor="middle" font-weight="bold" textLength="18" lengthAdjust="spacingAndGlyphs" >L</text>
<text x="989.3" y="852" font-size="16.5" fill="#c8c4b8" text-anchor="middle" font-weight="normal" >0</text>
<text x="1006.5" y="852" font-size="16.5" fill="#c8c4b8" text-anchor="middle" font-weight="normal" >1</text>
<text x="1022.5" y="852" font-size="16.5" fill="#c8c4b8" text-anchor="middle" font-weight="normal" >2</text>
<text x="1037.5" y="852" font-size="16.5" fill="#c8c4b8" text-anchor="middle" font-weight="normal" >3</text>
<text x="1059.5" y="852" font-size="16.5" fill="#c8c4b8" text-anchor="middle" font-weight="normal" >4</text>
<text x="1074.5" y="852" font-size="16.5" fill="#c8c4b8" text-anchor="middle" font-weight="normal" >5</text>
<text x="1091.5" y="852" font-size="16.5" fill="#c8c4b8" text-anchor="middle" font-weight="normal" >6</text>
<text x="1109" y="852" font-size="16.5" fill="#c8c4b8" text-anchor="middle" font-weight="normal" >7</text>
<text x="988.5" y="877" font-size="16.5" fill="#c8c4b8" text-anchor="middle" font-weight="normal" >8</text>
<text x="1006" y="877" font-size="16.5" fill="#c8c4b8" text-anchor="middle" font-weight="normal" >9</text>
<text x="1024.5" y="877" font-size="16.5" fill="#c8c4b8" text-anchor="middle" font-weight="normal" textLength="13.5" lengthAdjust="spacingAndGlyphs" >10</text>
<text x="1039" y="877" font-size="16.5" fill="#c8c4b8" text-anchor="middle" font-weight="normal" textLength="13.5" lengthAdjust="spacingAndGlyphs" >11</text>
<text x="1060.5" y="877" font-size="16.5" fill="#c8c4b8" text-anchor="middle" font-weight="normal" textLength="13.5" lengthAdjust="spacingAndGlyphs" >12</text>
<text x="1077" y="877" font-size="16.5" fill="#c8c4b8" text-anchor="middle" font-weight="normal" textLength="13.5" lengthAdjust="spacingAndGlyphs" >13</text>
<text x="1093" y="877" font-size="16.5" fill="#c8c4b8" text-anchor="middle" font-weight="normal" textLength="13.5" lengthAdjust="spacingAndGlyphs" >14</text>
<text x="1110" y="877" font-size="16.5" fill="#c8c4b8" text-anchor="middle" font-weight="normal" textLength="13.5" lengthAdjust="spacingAndGlyphs" >15</text>
<polygon points="1131,822.5 1194,822.5 1211.5,839.5 1211.5,892.5 1131,892.5" fill="#000" stroke="#4a4d4b" stroke-width="2" />
<text x="1168" y="857" style="font-family:'Liberation Serif',serif" font-size="30" fill="#34373a" text-anchor="middle" textLength="30" lengthAdjust="spacingAndGlyphs">GI</text>
<path d="M1154,873.5 L1161.5,866 Q1164,863.5 1166.5,866 L1178,879.5 Q1180.5,882 1183,879.5 L1188,873.5" fill="none" stroke="#a8aca8" stroke-width="2.5" stroke-linecap="round" stroke-linejoin="round"/>
<polygon points="1212.5,822.5 1275.5,822.5 1293.0,839.5 1293.0,892.5 1212.5,892.5" fill="#000" stroke="#4a4d4b" stroke-width="2" />
<text x="1250.5" y="857" style="font-family:'Liberation Serif',serif" font-size="30" fill="#34373a" text-anchor="middle" textLength="35" lengthAdjust="spacingAndGlyphs">GII</text>
<path d="M1235.5,873.5 L1243.0,866 Q1245.5,863.5 1248.0,866 L1259.5,879.5 Q1262.0,882 1264.5,879.5 L1269.5,873.5" fill="none" stroke="#a8aca8" stroke-width="2.5" stroke-linecap="round" stroke-linejoin="round"/>
<text x="1392" y="888.5" font-size="25" font-weight="bold" font-style="italic" fill="#eef0ee" textLength="34" lengthAdjust="spacingAndGlyphs">LXI</text>
<path d="M1452.5,868 L1452.5,889 Q1451.5,891.5 1449,889.5 L1440,882 Q1436.5,878.5 1440,875 L1449,867.5 Q1451.5,865.5 1452.5,868 Z" fill="#180808" stroke="#f0f0e8" stroke-width="2.2"/>
<line x1="1447.5" y1="870" x2="1447.5" y2="887" stroke="#f0f0e8" stroke-width="1.5" />
<line x1="1456" y1="875" x2="1466" y2="884.5" stroke="#c8c8c0" stroke-width="1.6" />
<line x1="1466" y1="875" x2="1456" y2="884.5" stroke="#c8c8c0" stroke-width="1.6" />
<text x="1533" y="890" font-size="26" fill="#e0e0d8" text-anchor="end" font-weight="normal" textLength="56" lengthAdjust="spacingAndGlyphs" >13:11</text>
</svg></body></html>
